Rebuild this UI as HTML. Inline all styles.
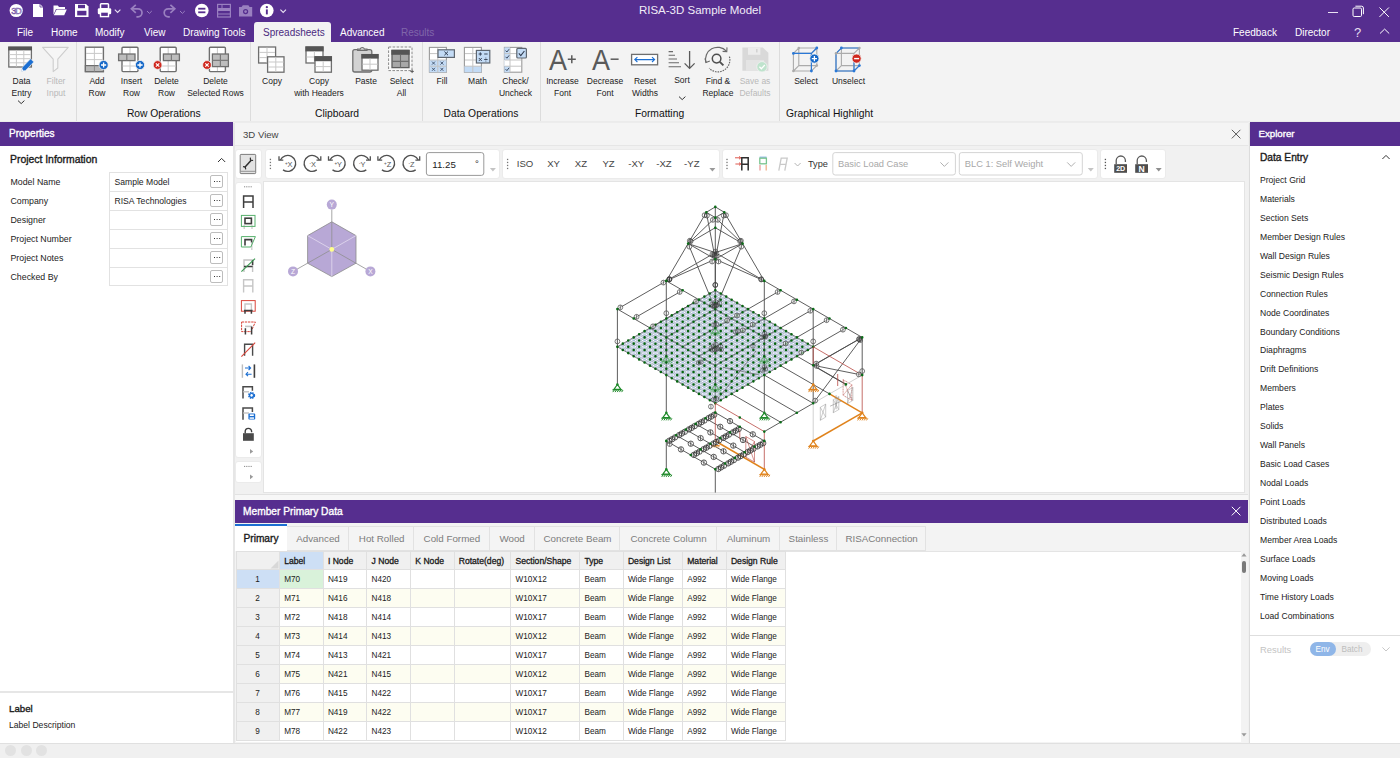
<!DOCTYPE html>
<html lang="en"><head><meta charset="utf-8"><title>RISA-3D Sample Model</title>
<style>
*{box-sizing:border-box;margin:0;padding:0}
html,body{width:1400px;height:758px;overflow:hidden;background:#f0f0f0;font-family:"Liberation Sans",sans-serif;font-size:11px;color:#1a1a1a}
.abs{position:absolute}
#app{position:relative;width:1400px;height:758px;overflow:hidden}
.pur{background:#562e8f}
#titlebar{left:0;top:0;width:1400px;height:42px}
.t{position:absolute;white-space:nowrap;line-height:1}
.tab{position:absolute;top:26px;color:#fff;font-size:10px;white-space:nowrap;line-height:14px}
#ribbon{left:0;top:42px;width:1400px;height:80.4px;background:#f3f3f3;border-bottom:1px solid #ebebeb}
.rb{position:absolute;top:75px;text-align:center;font-size:8.5px;line-height:12px;color:#222;white-space:nowrap;transform:translateX(-50%)}
.rb.dis{color:#b9b9b9}
.gl{position:absolute;top:107px;font-size:10.3px;color:#111;white-space:nowrap;transform:translateX(-50%);line-height:14px}
.vsep{position:absolute;top:42px;width:1px;height:79px;background:#dcdcdc}
.ico{position:absolute}
.hdr{position:absolute;height:23px;color:#fff;font-size:12px;line-height:23px;padding-left:9px}
.pl{left:10.5px;font-size:8.8px;color:#222}
.pv{left:114.5px;font-size:8.6px;color:#222}
.dots{position:absolute;left:210px;width:13px;height:12.5px;border:1px solid #bdbdbd;border-radius:2px;background:#fff}
.dots:after{content:"";position:absolute;left:2.5px;top:4.6px;width:1.3px;height:1.3px;background:#333;box-shadow:2.6px 0 0 #333,5.2px 0 0 #333}
.ex{left:1260px;font-size:8.6px;color:#222}
.tb{position:absolute;top:149px;height:30px;background:#fff;border-radius:3px;border:1px solid #ebebeb}
.th{font-size:8.6px;color:#1a1a1a;-webkit-text-stroke:0.3px #1a1a1a}
.td{font-size:8.2px;color:#222}
.sb{-webkit-text-stroke:0.35px currentColor}
</style></head><body><div id="app">
<div id="titlebar" class="abs pur">
<svg class="abs" style="left:0.5px;top:0.2px" width="300" height="22" viewBox="0 0 300 22">
 <!-- 3D logo -->
 <circle cx="15.2" cy="10.5" r="6.6" fill="#fff"/>
 <text x="15" y="13.7" font-size="9" text-anchor="middle" fill="#fff" stroke="#7553a6" stroke-width="0.55" font-family="Liberation Sans, sans-serif" letter-spacing="-0.9">3D</text>
 <!-- new doc -->
 <path d="M32 4h7l3 3v10h-10z" fill="#fff"/><path d="M39 4v3h3" fill="none" stroke="#562e8f" stroke-width="0.8"/>
 <!-- open folder -->
 <path d="M52.5 5.5h4.3l1.2 1.4h6v2H55l-2.5 5.8z" fill="#fff"/><path d="M55.6 9.6h10.2l-2.6 5.6h-10.4z" fill="#fff"/>
 <!-- save -->
 <path d="M74 4h11l2.5 2.5v10.5h-13.5z" fill="#fff"/><rect x="77" y="4.8" width="7" height="3.4" fill="#562e8f"/><rect x="76.2" y="10.8" width="9.2" height="4.6" fill="#562e8f"/>
 <!-- print -->
 <rect x="99.5" y="3.8" width="8" height="5" rx="0.8" fill="none" stroke="#fff" stroke-width="1.5"/><rect x="96.8" y="8.2" width="13.4" height="6" rx="1.2" fill="#fff"/><rect x="99.5" y="12" width="8" height="4.6" fill="#562e8f" stroke="#fff" stroke-width="1.4"/>
 <path d="M113.8 9.6l2.8 2.8l2.8-2.8" fill="none" stroke="#e8e0f2" stroke-width="1.1"/>
 <!-- undo (dim) -->
 <path d="M134.8 4.8l-4.4 4l4.4 4" fill="none" stroke="#9a80c0" stroke-width="1.7"/><path d="M130.8 8.8h6.2a4 4 0 0 1 0 8h-1.6" fill="none" stroke="#9a80c0" stroke-width="1.7"/>
 <path d="M146 11l2.4 2.4l2.4-2.4" fill="none" stroke="#9a80c0" stroke-width="1"/>
 <!-- redo (dim) -->
 <path d="M169.4 4.8l4.4 4l-4.4 4" fill="none" stroke="#9a80c0" stroke-width="1.7"/><path d="M173.4 8.8h-6.2a4 4 0 0 0 0 8h1.6" fill="none" stroke="#9a80c0" stroke-width="1.7"/>
 <path d="M179 11l2.4 2.4l2.4-2.4" fill="none" stroke="#9a80c0" stroke-width="1"/>
 <!-- equals circle -->
 <circle cx="200.8" cy="10.5" r="6.8" fill="#fff"/><rect x="197.2" y="7.8" width="7.2" height="1.8" fill="#562e8f"/><rect x="197.2" y="11.4" width="7.2" height="1.8" fill="#562e8f"/>
 <!-- dim table -->
 <rect x="216.6" y="4.4" width="12.8" height="12.6" fill="none" stroke="#9a80c0" stroke-width="1.2"/><rect x="217" y="8" width="12" height="3" fill="#9a80c0"/><path d="M217 14h12M221 4.4v3.6" stroke="#9a80c0" stroke-width="1"/>
 <!-- dim camera -->
 <path d="M238 7h2.6l1.2-1.8h5.6l1.2 1.8h2.6v9.4h-13.2z" fill="#9a80c0"/><circle cx="244.6" cy="11.6" r="2.6" fill="#562e8f"/><circle cx="244.6" cy="11.6" r="1.3" fill="#9a80c0"/>
 <!-- info -->
 <circle cx="265.8" cy="10.5" r="6.8" fill="#fff"/><rect x="264.9" y="9.4" width="1.9" height="5" fill="#562e8f"/><circle cx="265.85" cy="7.2" r="1.15" fill="#562e8f"/>
 <path d="M279.4 9.6l2.8 2.8l2.8-2.8" fill="none" stroke="#e8e0f2" stroke-width="1.1"/>
</svg>
<div class="t" style="left:0;width:1400px;text-align:center;top:5px;font-size:11.5px;color:#f1ecf8">RISA-3D Sample Model</div>
<svg class="abs" style="left:1320px;top:0.6px" width="80" height="22" viewBox="0 0 80 22">
 <path d="M8 11.5h10" stroke="#e9e2f3" stroke-width="1"/>
 <rect x="33" y="7" width="8.5" height="8.5" rx="1.2" fill="none" stroke="#fff" stroke-width="1"/><path d="M35.4 5.2h6.2a1.8 1.8 0 0 1 1.8 1.8v6.2" fill="none" stroke="#fff" stroke-width="1"/>
 <path d="M59.5 6.5l9.4 9.4M68.9 6.5l-9.4 9.4" stroke="#fff" stroke-width="1"/>
</svg>
<div class="tab" style="left:17px">File</div>
<div class="tab" style="left:51px">Home</div>
<div class="tab" style="left:95px">Modify</div>
<div class="tab" style="left:144px">View</div>
<div class="tab" style="left:183px">Drawing Tools</div>
<div class="abs" style="left:254px;top:22px;width:77px;height:20px;background:#f3f3f3;border-radius:3px 3px 0 0"></div>
<div class="tab" style="left:263px;color:#4a2a80">Spreadsheets</div>
<div class="tab" style="left:340px">Advanced</div>
<div class="tab" style="left:401px;color:#8066aa">Results</div>
<div class="tab" style="left:1233px;top:26px">Feedback</div>
<div class="tab" style="left:1295px;top:26px">Director</div>
<div class="tab" style="left:1354px;top:25.5px;font-size:13px;color:#e6dff0">?</div>
<svg class="abs" style="left:1378px;top:26px" width="14" height="10" viewBox="0 0 14 10"><path d="M2 7.5l4.6-4.4l4.6 4.4" fill="none" stroke="#fff" stroke-width="1"/></svg>
</div>
<div id="ribbon" class="abs"></div>
<div class="vsep" style="left:76px"></div><div class="vsep" style="left:250px"></div><div class="vsep" style="left:422px"></div><div class="vsep" style="left:540px"></div><div class="vsep" style="left:779px"></div>
<svg class="abs" style="left:0;top:42px" width="900" height="80" viewBox="0 42 900 80" font-family="Liberation Sans, sans-serif">
<defs>
 <g id="plusB"><circle r="4.6" fill="#1568c8" stroke="#f3f3f3" stroke-width="0.8"/><path d="M-2.6 0h5.2M0-2.6v5.2" stroke="#fff" stroke-width="1.3"/></g>
 <g id="xR"><circle r="4.4" fill="#d0281e" stroke="#f3f3f3" stroke-width="0.8"/><path d="M-1.7-1.7l3.4 3.4M1.7-1.7l-3.4 3.4" stroke="#fff" stroke-width="1.2"/></g>
</defs>
<!-- Data Entry -->
<g><rect x="8.8" y="47.2" width="22.6" height="19.8" fill="#fff" stroke="#6e6e6e" stroke-width="1.3"/><rect x="8.2" y="46.6" width="23.8" height="3.8" fill="#555"/>
<path d="M9.4 54.6h21.4M9.4 58.7h21.4M9.4 62.8h21.4M16.4 50.4v16.2M23.8 50.4v16.2" stroke="#c9c9c9" stroke-width="1"/>
<path d="M21.2 71.6l1.2-4.4l8.2-8.4l3.2 3.2l-8.2 8.4z" fill="#1c6fd2" stroke="#f3f3f3" stroke-width="0.6"/><path d="M21.6 71.2l0.6-2.1l1.5 1.5z" fill="#fff"/></g>
<!-- Filter -->
<path d="M42.6 47.4h25.6l-10.4 11.8v8.8l-4.6 3.6v-12.4z" fill="#f6f6f6" stroke="#cdcdcd" stroke-width="1.1" stroke-linejoin="round"/>
<!-- Add Row -->
<g><rect x="85.4" y="47.2" width="18" height="24.4" fill="#fff" stroke="#6e6e6e" stroke-width="1.4"/><rect x="85.4" y="65.6" width="18" height="6" fill="#b9b9b9" stroke="#6e6e6e" stroke-width="1.2"/>
<path d="M86 53.4h17M86 59.6h17M94.4 48v17" stroke="#c9c9c9" stroke-width="1"/><path d="M94.4 65.6v6" stroke="#8a8a8a" stroke-width="1"/><use href="#plusB" x="103.6" y="65"/></g>
<!-- Insert Row -->
<g><rect x="122" y="47.2" width="16" height="24.4" rx="1" fill="#fff" stroke="#6e6e6e" stroke-width="1.4"/><path d="M130 48v23M122.6 66h15" stroke="#c9c9c9" stroke-width="1"/>
<rect x="118.6" y="54" width="16.4" height="6.6" fill="#bdbdbd" stroke="#6e6e6e" stroke-width="1.3"/><path d="M126.8 54v6.6" stroke="#7a7a7a" stroke-width="1.2"/><use href="#plusB" x="140" y="65"/></g>
<!-- Delete Row -->
<g><rect x="160.2" y="47.2" width="16" height="24.4" rx="1" fill="#fff" stroke="#6e6e6e" stroke-width="1.4"/><path d="M168.2 48v23M161 66h15" stroke="#c9c9c9" stroke-width="1"/>
<rect x="163.4" y="54" width="16" height="6.6" fill="#bdbdbd" stroke="#6e6e6e" stroke-width="1.3"/><path d="M171.4 54v6.6" stroke="#7a7a7a" stroke-width="1.2"/><use href="#xR" x="157.6" y="65"/></g>
<!-- Delete Selected Rows -->
<g><rect x="209.4" y="47.2" width="16" height="24.4" rx="1" fill="#fff" stroke="#6e6e6e" stroke-width="1.4"/><path d="M217.4 48v23" stroke="#c9c9c9" stroke-width="1"/>
<rect x="212.4" y="54" width="16" height="12.6" fill="#bdbdbd" stroke="#6e6e6e" stroke-width="1.3"/><path d="M220.4 54v12.6M212.4 60.3h16" stroke="#7a7a7a" stroke-width="1.2"/><use href="#xR" x="207" y="65"/></g>
<!-- Copy -->
<g><rect x="258.6" y="47" width="17" height="16" fill="#fff" stroke="#6e6e6e" stroke-width="1.3"/><path d="M259 52.4h16M259 57.6h16M267 47.6v15" stroke="#c9c9c9" stroke-width="1"/>
<rect x="267.6" y="56.8" width="16.4" height="15.4" fill="#fff" stroke="#6e6e6e" stroke-width="1.3"/><path d="M268 62h15.6M268 67h15.6M275.8 57.4v14.4" stroke="#c9c9c9" stroke-width="1"/></g>
<!-- Copy with Headers -->
<g><rect x="306" y="47" width="17" height="16" fill="#fff" stroke="#6e6e6e" stroke-width="1.3"/><rect x="305.4" y="46.4" width="18.2" height="5" fill="#555"/><path d="M306.6 57h16M314.4 51.4v11" stroke="#c9c9c9" stroke-width="1"/>
<rect x="315" y="56.8" width="16.4" height="15.4" fill="#fff" stroke="#6e6e6e" stroke-width="1.3"/><rect x="314.4" y="56.2" width="17.6" height="5" fill="#555"/><path d="M315.6 66.6h15.4M323.2 61.2v10.6" stroke="#c9c9c9" stroke-width="1"/></g>
<!-- Paste -->
<g><rect x="352.8" y="49.6" width="19" height="22.4" rx="2" fill="#d2d2d2" stroke="#6e6e6e" stroke-width="1.3"/><path d="M357.6 50.4v-1.4h2.6a2.2 2.2 0 0 1 4.2 0h2.6v1.4z" fill="#d2d2d2" stroke="#6e6e6e" stroke-width="1.1"/>
<rect x="362" y="54.6" width="16" height="15.6" fill="#fff" stroke="#6e6e6e" stroke-width="1.3"/><rect x="361.4" y="54" width="17.2" height="4.6" fill="#555"/><path d="M362.6 64.2h15M370 58.6v11.4" stroke="#c9c9c9" stroke-width="1"/></g>
<!-- Select All -->
<g><rect x="388.6" y="47" width="23.4" height="23.6" fill="#fafafa" stroke="#8a8a8a" stroke-width="1" stroke-dasharray="2.6 1.4"/><rect x="392" y="50.4" width="17" height="17.2" fill="#a8a8a8" stroke="#5e5e5e" stroke-width="1.3"/><rect x="391.4" y="49.8" width="18.2" height="5" fill="#555"/><path d="M392 61.4h17M400.5 54.8v12.8" stroke="#6e6e6e" stroke-width="1.1"/><path d="M410.4 71.4h3.4M412.1 69.7v3.4" stroke="#555" stroke-width="1"/></g>
<!-- Fill -->
<g><rect x="429.4" y="47.4" width="17" height="24.8" fill="#fff" stroke="#9a9a9a" stroke-width="1.1"/><rect x="429.4" y="60" width="17" height="12.2" fill="#c3dbf5"/><path d="M430 53.6h16M430 60h16M430 66.2h16M437.8 48v24" stroke="#c4c4c4" stroke-width="1"/>
<path d="M432 61.6l3 3M435 61.6l-3 3M440.4 61.6l3 3M443.4 61.6l-3 3M432 67.8l3 3M435 67.8l-3 3M440.4 67.8l3 3M443.4 67.8l-3 3" stroke="#3e4f68" stroke-width="0.9"/>
<rect x="438" y="49.8" width="16.4" height="7.6" fill="#c3dbf5" stroke="#5e6670" stroke-width="1.2"/><path d="M444.4 51.6l3.6 3.6M448 51.6l-3.6 3.6" stroke="#2e3a4e" stroke-width="1"/></g>
<!-- Math -->
<g><rect x="464.4" y="47.4" width="17" height="24.8" fill="#fff" stroke="#9a9a9a" stroke-width="1.1"/><rect x="464.4" y="66.2" width="17" height="6" fill="#c3dbf5"/><path d="M465 53.6h16M465 60h16M465 66.2h16M472.8 48v24" stroke="#c4c4c4" stroke-width="1"/>
<rect x="476.4" y="50.4" width="13.4" height="12.6" fill="#c3dbf5" stroke="#5e6670" stroke-width="1.2"/><path d="M478.6 54h3.4M480.3 52.3v3.4M484.2 54h3.4M478.8 58l3 3M481.8 58l-3 3M484.2 59.5h3.4" stroke="#2e3a4e" stroke-width="0.9"/><circle cx="485.9" cy="57.9" r="0.5" fill="#2e3a4e"/><circle cx="485.9" cy="61.1" r="0.5" fill="#2e3a4e"/></g>
<!-- Check/Uncheck -->
<g><rect x="504.4" y="47.4" width="17.4" height="24.8" fill="#fff" stroke="#9a9a9a" stroke-width="1.1"/><rect x="504.4" y="47.4" width="5.6" height="24.8" fill="#c3dbf5"/><rect x="504.4" y="60" width="5.6" height="6" fill="#fff"/><path d="M505 53.6h16M505 60h16M505 66.2h16M510 48v24" stroke="#c4c4c4" stroke-width="1"/>
<path d="M505.6 50.6l1.3 1.4l2.2-2.8M505.6 56.8l1.3 1.4l2.2-2.8M505.6 69.2l1.3 1.4l2.2-2.8" fill="none" stroke="#2e3a4e" stroke-width="0.9"/>
<rect x="516.8" y="48.4" width="9.6" height="9.6" rx="1" fill="#c3dbf5" stroke="#5e6670" stroke-width="1.2"/><path d="M518.8 53.4l2 2.2l3.6-4.6" fill="none" stroke="#2e3a4e" stroke-width="1.1"/></g>
<!-- Increase / Decrease font -->
<text x="549" y="70" font-size="29" fill="#5a5a5a" textLength="18" lengthAdjust="spacingAndGlyphs">A</text><path d="M567.8 59.2h8M571.8 55.2v8" stroke="#5a5a5a" stroke-width="1.5"/>
<text x="592" y="70" font-size="29" fill="#5a5a5a" textLength="18" lengthAdjust="spacingAndGlyphs">A</text><path d="M610.6 59.2h8" stroke="#5a5a5a" stroke-width="1.5"/>
<!-- Reset Widths -->
<g><rect x="631.6" y="54.4" width="26" height="10.4" fill="#fff" stroke="#6e6e6e" stroke-width="1.3"/><path d="M635 59.6h19.4M637.4 57.2l-2.6 2.4l2.6 2.4M652 57.2l2.6 2.4l-2.6 2.4" fill="none" stroke="#1c6fd2" stroke-width="1.1"/></g>
<!-- Sort -->
<path d="M668.6 51.6h4.4M668.6 55.3h6.4M668.6 59h8.4M668.6 62.8h10.4M668.6 66.8h12.4" stroke="#6a6a6a" stroke-width="1.1"/><path d="M689.6 51v17.2M684.6 63.4l5 5l5-5" fill="none" stroke="#5a5a5a" stroke-width="1.3"/>
<!-- Find & Replace -->
<g fill="none" stroke="#6a6a6a"><path d="M706 62.6a12 12 0 0 1 20.4-11.4" stroke-width="1.2"/><path d="M729.4 56.6a12 12 0 0 1-20.2 11.6" stroke-width="1.2" stroke-dasharray="1.6 1"/><path d="M722.6 51.4l4.2 0.2l0.2-4.2M705 58.4l1 4.2l3.8-1.6" stroke-width="1.1"/><circle cx="716.6" cy="58.6" r="4.3" stroke-width="1.5" stroke="#4e4e4e"/><path d="M719.8 61.8l3.6 3.6" stroke-width="1.9" stroke="#4e4e4e"/></g>
<!-- Save as defaults (disabled) -->
<g><path d="M742.4 47.4h20.4l5.6 5.4v18h-26z" fill="#d9d9d9"/><rect x="748" y="47.4" width="12.4" height="7.4" fill="#ececec"/><rect x="756" y="49" width="1.6" height="3.4" fill="#d2d2d2"/><rect x="746" y="60" width="18" height="10.8" fill="#e4e4e4"/><circle cx="762" cy="66.8" r="5.2" fill="#bfe3cd" stroke="#f3f3f3" stroke-width="0.8"/><path d="M759.4 66.8l2 2l3.4-3.8" fill="none" stroke="#fff" stroke-width="1.3"/></g>
<!-- Select -->
<g fill="none" stroke-width="1.1"><path d="M793.4 53.4l5.4-5.4h18v17.6l-5.4 5.4h-18zM793.4 53.4h18v17.6M811.4 53.4l5.4-5.4M798.8 48v17.6h18M798.8 65.6l-5.4 5.4" stroke="#ababab"/><path d="M793.4 53.4h18l5.4-5.4M811.4 53.4v17.6" stroke="#2a78d6"/>
<g fill="#2a78d6" stroke="none"><circle cx="793.4" cy="53.4" r="1.4"/><circle cx="816.8" cy="48" r="1.4"/><circle cx="811.4" cy="71" r="1.4"/></g><g fill="#ababab" stroke="none"><circle cx="798.8" cy="48" r="1.3"/><circle cx="793.4" cy="71" r="1.3"/><circle cx="816.8" cy="65.6" r="1.3"/></g></g><use href="#plusB" x="814.4" y="58.6"/>
<!-- Unselect -->
<g fill="none" stroke-width="1.1"><path d="M836 53.4l5.4-5.4h18v17.6l-5.4 5.4h-18zM836 53.4h18v17.6M854 53.4l5.4-5.4M841.4 48v17.6h18M841.4 65.6l-5.4 5.4" stroke="#ababab"/><path d="M836 71v-17.6l5.4-5.4h18M836 71h18l5.4-5.4M854 71v-10" stroke="#2a78d6"/>
<g fill="#2a78d6" stroke="none"><circle cx="836" cy="71" r="1.4"/><circle cx="854" cy="71" r="1.4"/><circle cx="841.4" cy="48" r="1.4"/><circle cx="859.4" cy="65.6" r="1.4"/></g><g fill="#ababab" stroke="none"><circle cx="836" cy="53.4" r="1.3"/><circle cx="859.4" cy="48" r="1.3"/></g></g>
<g transform="translate(856.6 58.6)"><circle r="4.6" fill="#d0281e" stroke="#f3f3f3" stroke-width="0.8"/><path d="M-2.5 0h5" stroke="#fff" stroke-width="1.4"/></g>
<!-- chevrons -->
<path d="M18 100.6l3.2 3l3.2-3" fill="none" stroke="#333" stroke-width="1"/><path d="M679 96.6l3.2 3l3.2-3" fill="none" stroke="#333" stroke-width="1"/>
</svg>
<div class="rb" style="left:21.5px">Data<br>Entry</div>
<div class="rb dis" style="left:56px">Filter<br>Input</div>
<div class="rb" style="left:97px">Add<br>Row</div>
<div class="rb" style="left:131.5px">Insert<br>Row</div>
<div class="rb" style="left:166.5px">Delete<br>Row</div>
<div class="rb" style="left:215.5px">Delete<br>Selected Rows</div>
<div class="rb" style="left:272px">Copy</div>
<div class="rb" style="left:319px">Copy<br>with Headers</div>
<div class="rb" style="left:366px">Paste</div>
<div class="rb" style="left:401.5px">Select<br>All</div>
<div class="rb" style="left:442px">Fill</div>
<div class="rb" style="left:477.5px">Math</div>
<div class="rb" style="left:515.5px">Check/<br>Uncheck</div>
<div class="rb" style="left:562.5px">Increase<br>Font</div>
<div class="rb" style="left:605px">Decrease<br>Font</div>
<div class="rb" style="left:645px">Reset<br>Widths</div>
<div class="rb" style="left:682px;top:74px">Sort</div>
<div class="rb" style="left:718px">Find &amp;<br>Replace</div>
<div class="rb dis" style="left:755px">Save as<br>Defaults</div>
<div class="rb" style="left:806px">Select</div>
<div class="rb" style="left:848.5px">Unselect</div>
<div class="gl" style="left:163.8px">Row Operations</div>
<div class="gl" style="left:337px">Clipboard</div>
<div class="gl" style="left:481px">Data Operations</div>
<div class="gl" style="left:659.5px">Formatting</div>
<div class="gl" style="left:829.5px">Graphical Highlight</div>
<!-- LEFT: Properties -->
<div class="abs" style="left:0;top:123px;width:233px;height:620px;background:#fff"></div>
<div class="abs pur" style="left:0;top:122.4px;width:233px;height:23.4px"></div>
<div class="t" style="left:9px;top:129px;font-size:10px;color:#fff;-webkit-text-stroke:0.35px #fff">Properties</div>
<div class="t" style="left:10px;top:154.6px;font-size:10.4px;color:#1a1a1a;-webkit-text-stroke:0.35px #1a1a1a">Project Information</div>
<svg class="abs" style="left:216px;top:155px" width="12" height="10" viewBox="0 0 12 10"><path d="M2 7l3.6-3.6l3.6 3.6" fill="none" stroke="#333" stroke-width="1"/></svg>
<div class="abs" style="left:108.5px;top:171.8px;width:119.5px;height:114.4px;border:1px solid #e2e2e2;background:#fff"></div>
<div class="abs" style="left:109px;top:190.8px;width:118px;height:1px;background:#e2e2e2"></div>
<div class="abs" style="left:109px;top:209.8px;width:118px;height:1px;background:#e2e2e2"></div>
<div class="abs" style="left:109px;top:228.8px;width:118px;height:1px;background:#e2e2e2"></div>
<div class="abs" style="left:109px;top:247.8px;width:118px;height:1px;background:#e2e2e2"></div>
<div class="abs" style="left:109px;top:266.8px;width:118px;height:1px;background:#e2e2e2"></div>
<div class="t pl" style="top:177.5px">Model Name</div><div class="t pl" style="top:196.5px">Company</div><div class="t pl" style="top:215.5px">Designer</div><div class="t pl" style="top:234.5px">Project Number</div><div class="t pl" style="top:253.5px">Project Notes</div><div class="t pl" style="top:272.5px">Checked By</div>
<div class="t pv" style="top:177.5px">Sample Model</div><div class="t pv" style="top:196.5px">RISA Technologies</div>
<div class="dots" style="top:175.4px"></div><div class="dots" style="top:194.4px"></div><div class="dots" style="top:213.4px"></div><div class="dots" style="top:232.4px"></div><div class="dots" style="top:251.4px"></div><div class="dots" style="top:270.4px"></div>
<div class="abs" style="left:0;top:691px;width:233px;height:2px;background:#e6e6e6"></div>
<div class="t" style="left:9px;top:704px;font-size:9.7px;color:#1a1a1a;-webkit-text-stroke:0.35px #1a1a1a">Label</div>
<div class="t" style="left:9px;top:720.5px;font-size:8.6px;color:#222">Label Description</div>
<!-- status bar -->
<div class="abs" style="left:0;top:743px;width:1400px;height:15px;background:#f0f0f0;border-top:1px solid #e0e0e0"></div>
<div class="abs" style="left:5px;top:745px;width:11px;height:11px;border-radius:50%;background:#e2e2e2"></div>
<div class="abs" style="left:20.5px;top:745px;width:11px;height:11px;border-radius:50%;background:#e2e2e2"></div>
<div class="abs" style="left:36px;top:745px;width:11px;height:11px;border-radius:50%;background:#e2e2e2"></div>
<!-- CENTER: 3D View -->
<div class="abs" style="left:233px;top:123px;width:2px;height:620px;background:#e6e6e6"></div>
<div class="abs" style="left:235px;top:494px;width:1013px;height:6px;background:#f7f7f7;border-top:1px solid #e2e2e2"></div>
<div class="abs" style="left:235px;top:123px;width:1013px;height:371px;background:#f1f1f1"></div>
<div class="abs" style="left:235px;top:122.4px;width:1013px;height:23.6px;background:#f4f4f4;border-bottom:1px solid #e6e6e6;border-top:1px solid #ececec"></div>
<div class="t" style="left:243px;top:130px;font-size:9.6px;color:#444">3D View</div>
<svg class="abs" style="left:1230px;top:128px" width="12" height="12" viewBox="0 0 12 12"><path d="M1.8 1.8l8.6 8.6M10.4 1.8l-8.6 8.6" stroke="#5a5a5a" stroke-width="1"/></svg>
<!-- toolbar boxes -->
<div class="tb" style="left:235px;width:26.6px"></div>
<div class="tb" style="left:265px;width:234.5px"></div>
<div class="tb" style="left:502px;width:217.5px"></div>
<div class="tb" style="left:721.5px;width:376px"></div>
<div class="tb" style="left:1100px;width:65.5px"></div>
<div class="tb" style="left:235px;width:26.6px;top:181.5px;height:276px"></div>
<div class="tb" style="left:235px;width:26.6px;top:460.6px;height:22.8px"></div>
<!-- canvas -->
<div class="abs" style="left:263px;top:180.5px;width:981.5px;height:312.8px;background:#fff;border:1px solid #e4e4e4"></div>
<svg class="abs" style="left:235px;top:146px" width="1013" height="348" viewBox="235 146 1013 348" font-family="Liberation Sans, sans-serif">
<defs>
 <g id="grip"><rect x="-0.65" y="-5.2" width="1.3" height="1.3"/><rect x="-0.65" y="-2.2" width="1.3" height="1.3"/><rect x="-0.65" y="0.8" width="1.3" height="1.3"/><rect x="-0.65" y="3.8" width="1.3" height="1.3"/></g>
 <g id="rotL" fill="none" stroke="#505050" stroke-width="1.3"><path d="M-7.3 -3.3A8 8 0 1 1 -4.7 6.5"/><path d="M-8.7 -7.2V-3.2H-4.4"/></g>
 <g id="rotR" fill="none" stroke="#505050" stroke-width="1.3"><path d="M7.3 -3.3A8 8 0 1 0 4.7 6.5"/><path d="M8.7 -7.2V-3.2H4.4"/></g>
 <path id="ovf" d="M-3 -1.6h6l-3 3.4z"/>
</defs>
<!-- wrench button -->
<rect x="240.2" y="154.4" width="15.5" height="19.2" rx="0.8" fill="#e3e3e3" stroke="#7c7c7c" stroke-width="1"/><path d="M240.6 171.3h14.8" stroke="#8a8a8a" stroke-width="0.9"/>
<path d="M244.6 167.4l6.6-7.2" stroke="#2e2e2e" stroke-width="1.5"/><path d="M250.3 157.6l0.2 2.6l2.6 0.3" fill="none" stroke="#2e2e2e" stroke-width="1.2"/><path d="M243 166.6l2.3 0.4l0.4 2.4" fill="none" stroke="#2e2e2e" stroke-width="1.2"/>
<!-- box2 -->
<use href="#grip" x="270.4" y="164" fill="#777"/>
<use href="#rotL" x="287.7" y="163.4"/><text x="288.7" y="166.6" font-size="7.4" fill="#555" text-anchor="middle"><tspan font-size="4.6" dy="-1.2">+</tspan><tspan dy="1.2">X</tspan></text>
<use href="#rotR" x="312.1" y="163.4"/><text x="312.70000000000005" y="166.6" font-size="7.4" fill="#555" text-anchor="middle"><tspan font-size="4.6" dy="-1.2">-</tspan><tspan dy="1.2">X</tspan></text>
<use href="#rotL" x="337.2" y="163.4"/><text x="338.2" y="166.6" font-size="7.4" fill="#555" text-anchor="middle"><tspan font-size="4.6" dy="-1.2">+</tspan><tspan dy="1.2">Y</tspan></text>
<use href="#rotR" x="361.6" y="163.4"/><text x="362.20000000000005" y="166.6" font-size="7.4" fill="#555" text-anchor="middle"><tspan font-size="4.6" dy="-1.2">-</tspan><tspan dy="1.2">Y</tspan></text>
<use href="#rotL" x="386.6" y="163.4"/><text x="387.6" y="166.6" font-size="7.4" fill="#555" text-anchor="middle"><tspan font-size="4.6" dy="-1.2">+</tspan><tspan dy="1.2">Z</tspan></text>
<use href="#rotR" x="411" y="163.4"/><text x="411.6" y="166.6" font-size="7.4" fill="#555" text-anchor="middle"><tspan font-size="4.6" dy="-1.2">-</tspan><tspan dy="1.2">Z</tspan></text>
<rect x="426.4" y="152.6" width="57.4" height="22.8" rx="2.4" fill="#fff" stroke="#9a9a9a" stroke-width="1"/>
<text x="432.3" y="167.6" font-size="9.7" fill="#222">11.25</text><text x="475" y="167.2" font-size="9.7" fill="#222">°</text>
<use href="#ovf" x="492.9" y="169.6" fill="#c4c4c4"/>
<!-- box3 -->
<use href="#grip" x="507.6" y="164" fill="#777"/>
<g font-size="9.6" fill="#444" text-anchor="middle"><text x="525" y="167.4">ISO</text><text x="553.6" y="167.4">XY</text><text x="581" y="167.4">XZ</text><text x="608.6" y="167.4">YZ</text><text x="636.2" y="167.4">-XY</text><text x="664" y="167.4">-XZ</text><text x="691.8" y="167.4">-YZ</text></g>
<use href="#ovf" x="712.4" y="169.6" fill="#9a9a9a"/>
<!-- box4 -->
<use href="#grip" x="727" y="164" fill="#777"/>
<path d="M741.8 170.4v-12.6h6.4v12.6M741.8 164.2h6.4" fill="none" stroke="#2e2e2e" stroke-width="1.5"/><path d="M735 157.8h5.6M735.4 164h5.2M739 156.4l1.8 1.4l-1.8 1.4M739 162.6l1.8 1.4l-1.8 1.4" fill="none" stroke="#d9453a" stroke-width="0.9"/>
<path d="M759.6 157.2h7" stroke="#7aa8e0" stroke-width="1.1"/><rect x="759.8" y="158.2" width="6.6" height="5.6" fill="none" stroke="#79c48e" stroke-width="1.3"/><path d="M760 165v5.6" stroke="#e89a9a" stroke-width="1.3"/><path d="M766.2 165v5.6" stroke="#f0b088" stroke-width="1.3"/>
<path d="M778.8 170.6l2.4-12.4h6l-2.4 12.4M780 164.4h6" fill="none" stroke="#c9c9c9" stroke-width="1.3"/>
<path d="M794.6 163l3 3l3-3" fill="none" stroke="#b5b5b5" stroke-width="1"/>
<text x="808" y="167.2" font-size="9.2" fill="#333">Type</text>
<rect x="832.8" y="152.6" width="122.6" height="22.4" rx="2.4" fill="#fff" stroke="#d4d4d4" stroke-width="1"/><text x="838" y="167.2" font-size="9.3" fill="#a8a8a8">Basic Load Case</text><path d="M940.4 162.4l4 4l4-4" fill="none" stroke="#b0b0b0" stroke-width="1"/>
<rect x="959.3" y="152.6" width="123" height="22.4" rx="2.4" fill="#fff" stroke="#d4d4d4" stroke-width="1"/><text x="964.8" y="167.2" font-size="9.3" fill="#a8a8a8">BLC 1: Self Weight</text><path d="M1067.2 162.4l4 4l4-4" fill="none" stroke="#b0b0b0" stroke-width="1"/>
<use href="#ovf" x="1090.8" y="169.6" fill="#c4c4c4"/>
<!-- box5 -->
<use href="#grip" x="1105.4" y="164" fill="#555"/>
<path d="M1116.2 164v-3.4a4.6 4.6 0 0 1 9.2 0v1.4" fill="none" stroke="#5a5a5a" stroke-width="1.3"/><rect x="1114.2" y="164.2" width="12.8" height="8.6" fill="#4e4e4e"/><text x="1120.6" y="171.4" font-size="7.2" font-weight="700" fill="#fff" text-anchor="middle" letter-spacing="-0.3">2D</text>
<path d="M1137.2 164v-3.4a4.6 4.6 0 0 1 9.2 0v1.4" fill="none" stroke="#5a5a5a" stroke-width="1.3"/><rect x="1135.2" y="164.2" width="12.8" height="8.6" fill="#4e4e4e"/><text x="1141.6" y="171.9" font-size="8.6" font-weight="700" fill="#fff" text-anchor="middle">N</text>
<use href="#ovf" x="1158.7" y="169.6" fill="#8e8e8e"/>
<!-- vertical toolbar -->
<g id="vt">
<path d="M244 186.8h1.2M246.2 186.8h1.2M248.4 186.8h1.2M250.6 186.8h1.2" stroke="#888" stroke-width="1"/>
<path d="M243.6 208v-12h9.4v12M243.6 202h9.4" fill="none" stroke="#3e3e3e" stroke-width="1.5"/>
<path d="M244.2 229v-4M252 229v-4" stroke="#d0d0d0" stroke-width="1.4"/><rect x="241.4" y="215.4" width="13.6" height="11" fill="none" stroke="#57b06c" stroke-width="1"/><rect x="245" y="218.2" width="6.4" height="5.4" fill="none" stroke="#3e3e3e" stroke-width="1.6"/>
<path d="M251.8 250v-7" stroke="#d0d0d0" stroke-width="1.4"/><path d="M241.4 236.6h14l-4.6 10.4h-9.4z" fill="none" stroke="#57b06c" stroke-width="1"/><path d="M245 245.4v-5.8h6.6v3" fill="none" stroke="#3e3e3e" stroke-width="1.6"/>
<path d="M244 272v-12h8.6v12" fill="none" stroke="#c4c4c4" stroke-width="1.4"/><path d="M244 266.4h8.6M252.6 260v5" stroke="#3e3e3e" stroke-width="1.5"/><path d="M241.4 271.6l13.6-13" stroke="#3c9a52" stroke-width="1.2"/>
<path d="M243.6 292.4v-12.6h9.2v12.6M243.6 286h9.2" fill="none" stroke="#c6c6c6" stroke-width="1.4"/>
<rect x="241.4" y="300.6" width="13.8" height="10.6" fill="none" stroke="#d9453a" stroke-width="1"/><path d="M245 310v-6h6.4v6" fill="none" stroke="#c6c6c6" stroke-width="1.4"/><path d="M245 310.4v3.4M251.4 310.4v3.4M244 310.6h8.6" stroke="#3e3e3e" stroke-width="1.5"/>
<path d="M241.6 322h13.8l-4.4 9.6h-9.4z" fill="none" stroke="#d9453a" stroke-width="1" stroke-dasharray="2.4 0.8"/><path d="M245 326.4h6.6" stroke="#c6c6c6" stroke-width="1.6"/><path d="M245.4 334.6v-6.4M251.6 334.6v-8" stroke="#3e3e3e" stroke-width="1.5"/>
<path d="M244.6 355.8v-11.6h8v11.6" fill="none" stroke="#4a4a4a" stroke-width="1.4"/><path d="M241.4 356.6l13.8-14" stroke="#d9453a" stroke-width="1.1"/>
<path d="M242.4 364.4v13.4" stroke="#bdbdbd" stroke-width="1.4"/><path d="M254.4 364.4v13.4" stroke="#3e3e3e" stroke-width="1.6"/><path d="M245 368h5.6M248.6 366l2 2l-2 2M251.6 374.2h-5.6M248 372.2l-2 2l2 2" fill="none" stroke="#1c6fd2" stroke-width="1.1"/>
<path d="M243 398.6v-11.8h9.4v4" fill="none" stroke="#4a4a4a" stroke-width="1.5"/><path d="M243 391.8h6" stroke="#bdbdbd" stroke-width="1.3"/><circle cx="251.6" cy="395.4" r="2.6" fill="none" stroke="#1c6fd2" stroke-width="1.9" stroke-dasharray="1.4 0.7"/><circle cx="251.6" cy="395.4" r="1.9" fill="none" stroke="#1c6fd2" stroke-width="1.2"/>
<path d="M243 419.8v-11.8h9.4v4" fill="none" stroke="#4a4a4a" stroke-width="1.5"/><path d="M243 413h6" stroke="#bdbdbd" stroke-width="1.3"/><rect x="248.4" y="413.6" width="6.8" height="6" rx="0.8" fill="#1c6fd2"/><rect x="249.8" y="414.4" width="4" height="1.6" fill="#fff"/><rect x="249.6" y="417.2" width="4.4" height="1.8" fill="#cfe0f5"/>
<path d="M245.2 433.6v-2a3.2 3.2 0 0 1 6.4 0v0.6" fill="none" stroke="#3e3e3e" stroke-width="1.4"/><rect x="243" y="433.2" width="10.8" height="7.6" fill="#4a4a4a"/>
<path d="M250 449l3.2 2.4l-3.2 2.4z" fill="#9a9a9a"/>
<path d="M244 466.4h1.2M246.2 466.4h1.2M248.4 466.4h1.2M250.6 466.4h1.2" stroke="#888" stroke-width="1"/>
<path d="M250 474.4l3.2 2.4l-3.2 2.4z" fill="#9a9a9a"/>
</g>
</svg>
<svg class="abs" style="left:264px;top:181px" width="980" height="312" viewBox="264 181 980 312">
<g id="axiscube" font-family="Liberation Sans, sans-serif">
<path d="M331.8 221.8L356 235.6V263.2L331.8 276.6L307.6 263.2V235.6z" fill="#b8a8d6" stroke="#8c8c8c" stroke-width="0.8"/>
<path d="M331.8 249.4L307.6 235.6M331.8 249.4L356 235.6M331.8 249.4V276.6" stroke="#e9e3f3" stroke-width="0.7"/>
<path d="M331.8 249.4V209.4M331.8 249.4L297 269.2M331.8 249.4L366.4 269.2" stroke="#8f8f8f" stroke-width="0.8"/>
<circle cx="331.8" cy="204.6" r="5" fill="#b8a8d6"/><circle cx="293" cy="271.4" r="5" fill="#b8a8d6"/><circle cx="370.4" cy="271.4" r="5" fill="#b8a8d6"/>
<circle cx="331.8" cy="249.4" r="2.4" fill="#ffff8c"/>
<g font-size="6.6" fill="#fff" text-anchor="middle"><text x="331.8" y="207">Y</text><text x="293" y="273.8">Z</text><text x="370.4" y="273.8">X</text></g>
</g>
<g id="model">
<clipPath id="mclip"><path d="M617.4 346.8L715.3 290.3L813.2 346.8L715.3 403.3z"/></clipPath>
<path d="M715.3 252.6L715.3 328.0M666.3 280.9L666.3 356.3M617.4 309.1L617.4 384.5M764.3 280.9L764.3 356.3M715.3 309.1L715.3 384.5M666.3 337.4L666.3 412.8M813.2 309.1L813.2 384.5M764.3 337.4L764.3 412.8M715.3 365.6L715.3 403.3M862.2 337.4L862.2 375.1M813.2 385.3L813.2 403.3M715.3 252.6L862.2 337.4M715.3 252.6L617.4 309.1M617.4 309.1L715.3 365.6M666.3 280.9L764.3 337.4M682.7 290.3L633.7 318.5M699.0 299.7L650.0 328.0M780.6 290.3L682.7 346.8M796.9 299.7L699.0 356.2M813.2 309.1L715.3 365.6M829.5 318.5L780.6 346.8M845.9 328.0L796.9 356.2M862.2 337.4L813.2 365.6M715.3 309.1L666.3 337.4M796.9 356.2L845.9 384.5M780.6 365.7L829.5 393.9M764.3 375.1L813.2 403.3M747.9 384.5L796.9 412.8M731.6 393.9L780.6 422.2M813.2 403.3L764.3 431.6M813.2 365.3L862.2 337.4M813.2 365.3L862.2 375.1M862.2 337.4L813.2 403.3M813.2 365.3L845.9 384.2M756.0 351.0L718.0 398.8M723.0 367.5L759.3 374.9M715.3 206.9L715.3 309.1M666.3 280.9L688.1 243.6M764.3 280.9L742.6 243.6M688.1 243.6L706.3 212.3M742.6 243.6L724.3 212.3M688.1 243.6L715.3 227.7M742.6 243.6L715.3 227.7M688.1 243.6L715.3 259.2M742.6 243.6L715.3 259.2M715.3 206.9L706.3 212.3M715.3 206.9L724.3 212.3M706.3 212.3L715.3 217.6M724.3 212.3L715.3 217.6M706.3 212.3L715.3 259.2M724.3 212.3L715.3 259.2M688.1 243.6L715.3 217.6M742.6 243.6L715.3 217.6M688.1 243.6L715.3 309.1M742.6 243.6L715.3 309.1M666.3 280.9L715.3 259.2M764.3 280.9L715.3 259.2M688.1 243.6L715.3 252.6M742.6 243.6L715.3 252.6M715.3 412.6L666.3 440.9M739.8 426.8L690.8 455.0M764.3 440.9L715.3 469.2M715.3 412.6L764.3 440.9M705.5 418.3L754.5 446.6M695.7 423.9L744.7 452.2M685.9 429.6L734.9 457.9M676.1 435.2L725.1 463.5M666.3 440.9L715.3 469.2M666.3 440.9L666.3 469.3M715.3 469.2L715.3 492.6" fill="none" stroke="#4c4c4c" stroke-width="0.9"/>
<path d="M617.4 346.8L715.3 290.3L813.2 346.8L715.3 403.3z" fill="#c6d3e6" fill-opacity="0.8" stroke="#5e5e5e" stroke-width="0.8"/>
<path d="M712.20 293.44a3.1 1.55 0 1 0 6.2 0a3.1 1.55 0 1 0 -6.2 0M706.76 296.58a3.1 1.55 0 1 0 6.2 0a3.1 1.55 0 1 0 -6.2 0M701.32 299.72a3.1 1.55 0 1 0 6.2 0a3.1 1.55 0 1 0 -6.2 0M695.88 302.86a3.1 1.55 0 1 0 6.2 0a3.1 1.55 0 1 0 -6.2 0M690.44 306.00a3.1 1.55 0 1 0 6.2 0a3.1 1.55 0 1 0 -6.2 0M685.00 309.14a3.1 1.55 0 1 0 6.2 0a3.1 1.55 0 1 0 -6.2 0M679.56 312.28a3.1 1.55 0 1 0 6.2 0a3.1 1.55 0 1 0 -6.2 0M674.12 315.42a3.1 1.55 0 1 0 6.2 0a3.1 1.55 0 1 0 -6.2 0M668.68 318.56a3.1 1.55 0 1 0 6.2 0a3.1 1.55 0 1 0 -6.2 0M663.24 321.70a3.1 1.55 0 1 0 6.2 0a3.1 1.55 0 1 0 -6.2 0M657.80 324.84a3.1 1.55 0 1 0 6.2 0a3.1 1.55 0 1 0 -6.2 0M652.36 327.98a3.1 1.55 0 1 0 6.2 0a3.1 1.55 0 1 0 -6.2 0M646.92 331.12a3.1 1.55 0 1 0 6.2 0a3.1 1.55 0 1 0 -6.2 0M641.48 334.26a3.1 1.55 0 1 0 6.2 0a3.1 1.55 0 1 0 -6.2 0M636.04 337.40a3.1 1.55 0 1 0 6.2 0a3.1 1.55 0 1 0 -6.2 0M630.60 340.54a3.1 1.55 0 1 0 6.2 0a3.1 1.55 0 1 0 -6.2 0M625.16 343.68a3.1 1.55 0 1 0 6.2 0a3.1 1.55 0 1 0 -6.2 0M619.72 346.82a3.1 1.55 0 1 0 6.2 0a3.1 1.55 0 1 0 -6.2 0M717.64 296.58a3.1 1.55 0 1 0 6.2 0a3.1 1.55 0 1 0 -6.2 0M712.20 299.72a3.1 1.55 0 1 0 6.2 0a3.1 1.55 0 1 0 -6.2 0M706.76 302.86a3.1 1.55 0 1 0 6.2 0a3.1 1.55 0 1 0 -6.2 0M701.32 306.00a3.1 1.55 0 1 0 6.2 0a3.1 1.55 0 1 0 -6.2 0M695.88 309.14a3.1 1.55 0 1 0 6.2 0a3.1 1.55 0 1 0 -6.2 0M690.44 312.28a3.1 1.55 0 1 0 6.2 0a3.1 1.55 0 1 0 -6.2 0M685.00 315.42a3.1 1.55 0 1 0 6.2 0a3.1 1.55 0 1 0 -6.2 0M679.56 318.56a3.1 1.55 0 1 0 6.2 0a3.1 1.55 0 1 0 -6.2 0M674.12 321.70a3.1 1.55 0 1 0 6.2 0a3.1 1.55 0 1 0 -6.2 0M668.68 324.84a3.1 1.55 0 1 0 6.2 0a3.1 1.55 0 1 0 -6.2 0M663.24 327.98a3.1 1.55 0 1 0 6.2 0a3.1 1.55 0 1 0 -6.2 0M657.80 331.12a3.1 1.55 0 1 0 6.2 0a3.1 1.55 0 1 0 -6.2 0M652.36 334.26a3.1 1.55 0 1 0 6.2 0a3.1 1.55 0 1 0 -6.2 0M646.92 337.40a3.1 1.55 0 1 0 6.2 0a3.1 1.55 0 1 0 -6.2 0M641.48 340.54a3.1 1.55 0 1 0 6.2 0a3.1 1.55 0 1 0 -6.2 0M636.04 343.68a3.1 1.55 0 1 0 6.2 0a3.1 1.55 0 1 0 -6.2 0M630.60 346.82a3.1 1.55 0 1 0 6.2 0a3.1 1.55 0 1 0 -6.2 0M625.16 349.96a3.1 1.55 0 1 0 6.2 0a3.1 1.55 0 1 0 -6.2 0M723.08 299.72a3.1 1.55 0 1 0 6.2 0a3.1 1.55 0 1 0 -6.2 0M717.64 302.86a3.1 1.55 0 1 0 6.2 0a3.1 1.55 0 1 0 -6.2 0M712.20 306.00a3.1 1.55 0 1 0 6.2 0a3.1 1.55 0 1 0 -6.2 0M706.76 309.14a3.1 1.55 0 1 0 6.2 0a3.1 1.55 0 1 0 -6.2 0M701.32 312.28a3.1 1.55 0 1 0 6.2 0a3.1 1.55 0 1 0 -6.2 0M695.88 315.42a3.1 1.55 0 1 0 6.2 0a3.1 1.55 0 1 0 -6.2 0M690.44 318.56a3.1 1.55 0 1 0 6.2 0a3.1 1.55 0 1 0 -6.2 0M685.00 321.70a3.1 1.55 0 1 0 6.2 0a3.1 1.55 0 1 0 -6.2 0M679.56 324.84a3.1 1.55 0 1 0 6.2 0a3.1 1.55 0 1 0 -6.2 0M674.12 327.98a3.1 1.55 0 1 0 6.2 0a3.1 1.55 0 1 0 -6.2 0M668.68 331.12a3.1 1.55 0 1 0 6.2 0a3.1 1.55 0 1 0 -6.2 0M663.24 334.26a3.1 1.55 0 1 0 6.2 0a3.1 1.55 0 1 0 -6.2 0M657.80 337.40a3.1 1.55 0 1 0 6.2 0a3.1 1.55 0 1 0 -6.2 0M652.36 340.54a3.1 1.55 0 1 0 6.2 0a3.1 1.55 0 1 0 -6.2 0M646.92 343.68a3.1 1.55 0 1 0 6.2 0a3.1 1.55 0 1 0 -6.2 0M641.48 346.82a3.1 1.55 0 1 0 6.2 0a3.1 1.55 0 1 0 -6.2 0M636.04 349.96a3.1 1.55 0 1 0 6.2 0a3.1 1.55 0 1 0 -6.2 0M630.60 353.10a3.1 1.55 0 1 0 6.2 0a3.1 1.55 0 1 0 -6.2 0M728.52 302.86a3.1 1.55 0 1 0 6.2 0a3.1 1.55 0 1 0 -6.2 0M723.08 306.00a3.1 1.55 0 1 0 6.2 0a3.1 1.55 0 1 0 -6.2 0M717.64 309.14a3.1 1.55 0 1 0 6.2 0a3.1 1.55 0 1 0 -6.2 0M712.20 312.28a3.1 1.55 0 1 0 6.2 0a3.1 1.55 0 1 0 -6.2 0M706.76 315.42a3.1 1.55 0 1 0 6.2 0a3.1 1.55 0 1 0 -6.2 0M701.32 318.56a3.1 1.55 0 1 0 6.2 0a3.1 1.55 0 1 0 -6.2 0M695.88 321.70a3.1 1.55 0 1 0 6.2 0a3.1 1.55 0 1 0 -6.2 0M690.44 324.84a3.1 1.55 0 1 0 6.2 0a3.1 1.55 0 1 0 -6.2 0M685.00 327.98a3.1 1.55 0 1 0 6.2 0a3.1 1.55 0 1 0 -6.2 0M679.56 331.12a3.1 1.55 0 1 0 6.2 0a3.1 1.55 0 1 0 -6.2 0M674.12 334.26a3.1 1.55 0 1 0 6.2 0a3.1 1.55 0 1 0 -6.2 0M668.68 337.40a3.1 1.55 0 1 0 6.2 0a3.1 1.55 0 1 0 -6.2 0M663.24 340.54a3.1 1.55 0 1 0 6.2 0a3.1 1.55 0 1 0 -6.2 0M657.80 343.68a3.1 1.55 0 1 0 6.2 0a3.1 1.55 0 1 0 -6.2 0M652.36 346.82a3.1 1.55 0 1 0 6.2 0a3.1 1.55 0 1 0 -6.2 0M646.92 349.96a3.1 1.55 0 1 0 6.2 0a3.1 1.55 0 1 0 -6.2 0M641.48 353.10a3.1 1.55 0 1 0 6.2 0a3.1 1.55 0 1 0 -6.2 0M636.04 356.24a3.1 1.55 0 1 0 6.2 0a3.1 1.55 0 1 0 -6.2 0M733.96 306.00a3.1 1.55 0 1 0 6.2 0a3.1 1.55 0 1 0 -6.2 0M728.52 309.14a3.1 1.55 0 1 0 6.2 0a3.1 1.55 0 1 0 -6.2 0M723.08 312.28a3.1 1.55 0 1 0 6.2 0a3.1 1.55 0 1 0 -6.2 0M717.64 315.42a3.1 1.55 0 1 0 6.2 0a3.1 1.55 0 1 0 -6.2 0M712.20 318.56a3.1 1.55 0 1 0 6.2 0a3.1 1.55 0 1 0 -6.2 0M706.76 321.70a3.1 1.55 0 1 0 6.2 0a3.1 1.55 0 1 0 -6.2 0M701.32 324.84a3.1 1.55 0 1 0 6.2 0a3.1 1.55 0 1 0 -6.2 0M695.88 327.98a3.1 1.55 0 1 0 6.2 0a3.1 1.55 0 1 0 -6.2 0M690.44 331.12a3.1 1.55 0 1 0 6.2 0a3.1 1.55 0 1 0 -6.2 0M685.00 334.26a3.1 1.55 0 1 0 6.2 0a3.1 1.55 0 1 0 -6.2 0M679.56 337.40a3.1 1.55 0 1 0 6.2 0a3.1 1.55 0 1 0 -6.2 0M674.12 340.54a3.1 1.55 0 1 0 6.2 0a3.1 1.55 0 1 0 -6.2 0M668.68 343.68a3.1 1.55 0 1 0 6.2 0a3.1 1.55 0 1 0 -6.2 0M663.24 346.82a3.1 1.55 0 1 0 6.2 0a3.1 1.55 0 1 0 -6.2 0M657.80 349.96a3.1 1.55 0 1 0 6.2 0a3.1 1.55 0 1 0 -6.2 0M652.36 353.10a3.1 1.55 0 1 0 6.2 0a3.1 1.55 0 1 0 -6.2 0M646.92 356.24a3.1 1.55 0 1 0 6.2 0a3.1 1.55 0 1 0 -6.2 0M641.48 359.38a3.1 1.55 0 1 0 6.2 0a3.1 1.55 0 1 0 -6.2 0M739.40 309.14a3.1 1.55 0 1 0 6.2 0a3.1 1.55 0 1 0 -6.2 0M733.96 312.28a3.1 1.55 0 1 0 6.2 0a3.1 1.55 0 1 0 -6.2 0M728.52 315.42a3.1 1.55 0 1 0 6.2 0a3.1 1.55 0 1 0 -6.2 0M723.08 318.56a3.1 1.55 0 1 0 6.2 0a3.1 1.55 0 1 0 -6.2 0M717.64 321.70a3.1 1.55 0 1 0 6.2 0a3.1 1.55 0 1 0 -6.2 0M712.20 324.84a3.1 1.55 0 1 0 6.2 0a3.1 1.55 0 1 0 -6.2 0M706.76 327.98a3.1 1.55 0 1 0 6.2 0a3.1 1.55 0 1 0 -6.2 0M701.32 331.12a3.1 1.55 0 1 0 6.2 0a3.1 1.55 0 1 0 -6.2 0M695.88 334.26a3.1 1.55 0 1 0 6.2 0a3.1 1.55 0 1 0 -6.2 0M690.44 337.40a3.1 1.55 0 1 0 6.2 0a3.1 1.55 0 1 0 -6.2 0M685.00 340.54a3.1 1.55 0 1 0 6.2 0a3.1 1.55 0 1 0 -6.2 0M679.56 343.68a3.1 1.55 0 1 0 6.2 0a3.1 1.55 0 1 0 -6.2 0M674.12 346.82a3.1 1.55 0 1 0 6.2 0a3.1 1.55 0 1 0 -6.2 0M668.68 349.96a3.1 1.55 0 1 0 6.2 0a3.1 1.55 0 1 0 -6.2 0M663.24 353.10a3.1 1.55 0 1 0 6.2 0a3.1 1.55 0 1 0 -6.2 0M657.80 356.24a3.1 1.55 0 1 0 6.2 0a3.1 1.55 0 1 0 -6.2 0M652.36 359.38a3.1 1.55 0 1 0 6.2 0a3.1 1.55 0 1 0 -6.2 0M646.92 362.52a3.1 1.55 0 1 0 6.2 0a3.1 1.55 0 1 0 -6.2 0M744.84 312.28a3.1 1.55 0 1 0 6.2 0a3.1 1.55 0 1 0 -6.2 0M739.40 315.42a3.1 1.55 0 1 0 6.2 0a3.1 1.55 0 1 0 -6.2 0M733.96 318.56a3.1 1.55 0 1 0 6.2 0a3.1 1.55 0 1 0 -6.2 0M728.52 321.70a3.1 1.55 0 1 0 6.2 0a3.1 1.55 0 1 0 -6.2 0M723.08 324.84a3.1 1.55 0 1 0 6.2 0a3.1 1.55 0 1 0 -6.2 0M717.64 327.98a3.1 1.55 0 1 0 6.2 0a3.1 1.55 0 1 0 -6.2 0M712.20 331.12a3.1 1.55 0 1 0 6.2 0a3.1 1.55 0 1 0 -6.2 0M706.76 334.26a3.1 1.55 0 1 0 6.2 0a3.1 1.55 0 1 0 -6.2 0M701.32 337.40a3.1 1.55 0 1 0 6.2 0a3.1 1.55 0 1 0 -6.2 0M695.88 340.54a3.1 1.55 0 1 0 6.2 0a3.1 1.55 0 1 0 -6.2 0M690.44 343.68a3.1 1.55 0 1 0 6.2 0a3.1 1.55 0 1 0 -6.2 0M685.00 346.82a3.1 1.55 0 1 0 6.2 0a3.1 1.55 0 1 0 -6.2 0M679.56 349.96a3.1 1.55 0 1 0 6.2 0a3.1 1.55 0 1 0 -6.2 0M674.12 353.10a3.1 1.55 0 1 0 6.2 0a3.1 1.55 0 1 0 -6.2 0M668.68 356.24a3.1 1.55 0 1 0 6.2 0a3.1 1.55 0 1 0 -6.2 0M663.24 359.38a3.1 1.55 0 1 0 6.2 0a3.1 1.55 0 1 0 -6.2 0M657.80 362.52a3.1 1.55 0 1 0 6.2 0a3.1 1.55 0 1 0 -6.2 0M652.36 365.66a3.1 1.55 0 1 0 6.2 0a3.1 1.55 0 1 0 -6.2 0M750.28 315.42a3.1 1.55 0 1 0 6.2 0a3.1 1.55 0 1 0 -6.2 0M744.84 318.56a3.1 1.55 0 1 0 6.2 0a3.1 1.55 0 1 0 -6.2 0M739.40 321.70a3.1 1.55 0 1 0 6.2 0a3.1 1.55 0 1 0 -6.2 0M733.96 324.84a3.1 1.55 0 1 0 6.2 0a3.1 1.55 0 1 0 -6.2 0M728.52 327.98a3.1 1.55 0 1 0 6.2 0a3.1 1.55 0 1 0 -6.2 0M723.08 331.12a3.1 1.55 0 1 0 6.2 0a3.1 1.55 0 1 0 -6.2 0M717.64 334.26a3.1 1.55 0 1 0 6.2 0a3.1 1.55 0 1 0 -6.2 0M712.20 337.40a3.1 1.55 0 1 0 6.2 0a3.1 1.55 0 1 0 -6.2 0M706.76 340.54a3.1 1.55 0 1 0 6.2 0a3.1 1.55 0 1 0 -6.2 0M701.32 343.68a3.1 1.55 0 1 0 6.2 0a3.1 1.55 0 1 0 -6.2 0M695.88 346.82a3.1 1.55 0 1 0 6.2 0a3.1 1.55 0 1 0 -6.2 0M690.44 349.96a3.1 1.55 0 1 0 6.2 0a3.1 1.55 0 1 0 -6.2 0M685.00 353.10a3.1 1.55 0 1 0 6.2 0a3.1 1.55 0 1 0 -6.2 0M679.56 356.24a3.1 1.55 0 1 0 6.2 0a3.1 1.55 0 1 0 -6.2 0M674.12 359.38a3.1 1.55 0 1 0 6.2 0a3.1 1.55 0 1 0 -6.2 0M668.68 362.52a3.1 1.55 0 1 0 6.2 0a3.1 1.55 0 1 0 -6.2 0M663.24 365.66a3.1 1.55 0 1 0 6.2 0a3.1 1.55 0 1 0 -6.2 0M657.80 368.80a3.1 1.55 0 1 0 6.2 0a3.1 1.55 0 1 0 -6.2 0M755.72 318.56a3.1 1.55 0 1 0 6.2 0a3.1 1.55 0 1 0 -6.2 0M750.28 321.70a3.1 1.55 0 1 0 6.2 0a3.1 1.55 0 1 0 -6.2 0M744.84 324.84a3.1 1.55 0 1 0 6.2 0a3.1 1.55 0 1 0 -6.2 0M739.40 327.98a3.1 1.55 0 1 0 6.2 0a3.1 1.55 0 1 0 -6.2 0M733.96 331.12a3.1 1.55 0 1 0 6.2 0a3.1 1.55 0 1 0 -6.2 0M728.52 334.26a3.1 1.55 0 1 0 6.2 0a3.1 1.55 0 1 0 -6.2 0M723.08 337.40a3.1 1.55 0 1 0 6.2 0a3.1 1.55 0 1 0 -6.2 0M717.64 340.54a3.1 1.55 0 1 0 6.2 0a3.1 1.55 0 1 0 -6.2 0M712.20 343.68a3.1 1.55 0 1 0 6.2 0a3.1 1.55 0 1 0 -6.2 0M706.76 346.82a3.1 1.55 0 1 0 6.2 0a3.1 1.55 0 1 0 -6.2 0M701.32 349.96a3.1 1.55 0 1 0 6.2 0a3.1 1.55 0 1 0 -6.2 0M695.88 353.10a3.1 1.55 0 1 0 6.2 0a3.1 1.55 0 1 0 -6.2 0M690.44 356.24a3.1 1.55 0 1 0 6.2 0a3.1 1.55 0 1 0 -6.2 0M685.00 359.38a3.1 1.55 0 1 0 6.2 0a3.1 1.55 0 1 0 -6.2 0M679.56 362.52a3.1 1.55 0 1 0 6.2 0a3.1 1.55 0 1 0 -6.2 0M674.12 365.66a3.1 1.55 0 1 0 6.2 0a3.1 1.55 0 1 0 -6.2 0M668.68 368.80a3.1 1.55 0 1 0 6.2 0a3.1 1.55 0 1 0 -6.2 0M663.24 371.94a3.1 1.55 0 1 0 6.2 0a3.1 1.55 0 1 0 -6.2 0M761.16 321.70a3.1 1.55 0 1 0 6.2 0a3.1 1.55 0 1 0 -6.2 0M755.72 324.84a3.1 1.55 0 1 0 6.2 0a3.1 1.55 0 1 0 -6.2 0M750.28 327.98a3.1 1.55 0 1 0 6.2 0a3.1 1.55 0 1 0 -6.2 0M744.84 331.12a3.1 1.55 0 1 0 6.2 0a3.1 1.55 0 1 0 -6.2 0M739.40 334.26a3.1 1.55 0 1 0 6.2 0a3.1 1.55 0 1 0 -6.2 0M733.96 337.40a3.1 1.55 0 1 0 6.2 0a3.1 1.55 0 1 0 -6.2 0M728.52 340.54a3.1 1.55 0 1 0 6.2 0a3.1 1.55 0 1 0 -6.2 0M723.08 343.68a3.1 1.55 0 1 0 6.2 0a3.1 1.55 0 1 0 -6.2 0M717.64 346.82a3.1 1.55 0 1 0 6.2 0a3.1 1.55 0 1 0 -6.2 0M712.20 349.96a3.1 1.55 0 1 0 6.2 0a3.1 1.55 0 1 0 -6.2 0M706.76 353.10a3.1 1.55 0 1 0 6.2 0a3.1 1.55 0 1 0 -6.2 0M701.32 356.24a3.1 1.55 0 1 0 6.2 0a3.1 1.55 0 1 0 -6.2 0M695.88 359.38a3.1 1.55 0 1 0 6.2 0a3.1 1.55 0 1 0 -6.2 0M690.44 362.52a3.1 1.55 0 1 0 6.2 0a3.1 1.55 0 1 0 -6.2 0M685.00 365.66a3.1 1.55 0 1 0 6.2 0a3.1 1.55 0 1 0 -6.2 0M679.56 368.80a3.1 1.55 0 1 0 6.2 0a3.1 1.55 0 1 0 -6.2 0M674.12 371.94a3.1 1.55 0 1 0 6.2 0a3.1 1.55 0 1 0 -6.2 0M668.68 375.08a3.1 1.55 0 1 0 6.2 0a3.1 1.55 0 1 0 -6.2 0M766.60 324.84a3.1 1.55 0 1 0 6.2 0a3.1 1.55 0 1 0 -6.2 0M761.16 327.98a3.1 1.55 0 1 0 6.2 0a3.1 1.55 0 1 0 -6.2 0M755.72 331.12a3.1 1.55 0 1 0 6.2 0a3.1 1.55 0 1 0 -6.2 0M750.28 334.26a3.1 1.55 0 1 0 6.2 0a3.1 1.55 0 1 0 -6.2 0M744.84 337.40a3.1 1.55 0 1 0 6.2 0a3.1 1.55 0 1 0 -6.2 0M739.40 340.54a3.1 1.55 0 1 0 6.2 0a3.1 1.55 0 1 0 -6.2 0M733.96 343.68a3.1 1.55 0 1 0 6.2 0a3.1 1.55 0 1 0 -6.2 0M728.52 346.82a3.1 1.55 0 1 0 6.2 0a3.1 1.55 0 1 0 -6.2 0M723.08 349.96a3.1 1.55 0 1 0 6.2 0a3.1 1.55 0 1 0 -6.2 0M717.64 353.10a3.1 1.55 0 1 0 6.2 0a3.1 1.55 0 1 0 -6.2 0M712.20 356.24a3.1 1.55 0 1 0 6.2 0a3.1 1.55 0 1 0 -6.2 0M706.76 359.38a3.1 1.55 0 1 0 6.2 0a3.1 1.55 0 1 0 -6.2 0M701.32 362.52a3.1 1.55 0 1 0 6.2 0a3.1 1.55 0 1 0 -6.2 0M695.88 365.66a3.1 1.55 0 1 0 6.2 0a3.1 1.55 0 1 0 -6.2 0M690.44 368.80a3.1 1.55 0 1 0 6.2 0a3.1 1.55 0 1 0 -6.2 0M685.00 371.94a3.1 1.55 0 1 0 6.2 0a3.1 1.55 0 1 0 -6.2 0M679.56 375.08a3.1 1.55 0 1 0 6.2 0a3.1 1.55 0 1 0 -6.2 0M674.12 378.22a3.1 1.55 0 1 0 6.2 0a3.1 1.55 0 1 0 -6.2 0M772.04 327.98a3.1 1.55 0 1 0 6.2 0a3.1 1.55 0 1 0 -6.2 0M766.60 331.12a3.1 1.55 0 1 0 6.2 0a3.1 1.55 0 1 0 -6.2 0M761.16 334.26a3.1 1.55 0 1 0 6.2 0a3.1 1.55 0 1 0 -6.2 0M755.72 337.40a3.1 1.55 0 1 0 6.2 0a3.1 1.55 0 1 0 -6.2 0M750.28 340.54a3.1 1.55 0 1 0 6.2 0a3.1 1.55 0 1 0 -6.2 0M744.84 343.68a3.1 1.55 0 1 0 6.2 0a3.1 1.55 0 1 0 -6.2 0M739.40 346.82a3.1 1.55 0 1 0 6.2 0a3.1 1.55 0 1 0 -6.2 0M733.96 349.96a3.1 1.55 0 1 0 6.2 0a3.1 1.55 0 1 0 -6.2 0M728.52 353.10a3.1 1.55 0 1 0 6.2 0a3.1 1.55 0 1 0 -6.2 0M723.08 356.24a3.1 1.55 0 1 0 6.2 0a3.1 1.55 0 1 0 -6.2 0M717.64 359.38a3.1 1.55 0 1 0 6.2 0a3.1 1.55 0 1 0 -6.2 0M712.20 362.52a3.1 1.55 0 1 0 6.2 0a3.1 1.55 0 1 0 -6.2 0M706.76 365.66a3.1 1.55 0 1 0 6.2 0a3.1 1.55 0 1 0 -6.2 0M701.32 368.80a3.1 1.55 0 1 0 6.2 0a3.1 1.55 0 1 0 -6.2 0M695.88 371.94a3.1 1.55 0 1 0 6.2 0a3.1 1.55 0 1 0 -6.2 0M690.44 375.08a3.1 1.55 0 1 0 6.2 0a3.1 1.55 0 1 0 -6.2 0M685.00 378.22a3.1 1.55 0 1 0 6.2 0a3.1 1.55 0 1 0 -6.2 0M679.56 381.36a3.1 1.55 0 1 0 6.2 0a3.1 1.55 0 1 0 -6.2 0M777.48 331.12a3.1 1.55 0 1 0 6.2 0a3.1 1.55 0 1 0 -6.2 0M772.04 334.26a3.1 1.55 0 1 0 6.2 0a3.1 1.55 0 1 0 -6.2 0M766.60 337.40a3.1 1.55 0 1 0 6.2 0a3.1 1.55 0 1 0 -6.2 0M761.16 340.54a3.1 1.55 0 1 0 6.2 0a3.1 1.55 0 1 0 -6.2 0M755.72 343.68a3.1 1.55 0 1 0 6.2 0a3.1 1.55 0 1 0 -6.2 0M750.28 346.82a3.1 1.55 0 1 0 6.2 0a3.1 1.55 0 1 0 -6.2 0M744.84 349.96a3.1 1.55 0 1 0 6.2 0a3.1 1.55 0 1 0 -6.2 0M739.40 353.10a3.1 1.55 0 1 0 6.2 0a3.1 1.55 0 1 0 -6.2 0M733.96 356.24a3.1 1.55 0 1 0 6.2 0a3.1 1.55 0 1 0 -6.2 0M728.52 359.38a3.1 1.55 0 1 0 6.2 0a3.1 1.55 0 1 0 -6.2 0M723.08 362.52a3.1 1.55 0 1 0 6.2 0a3.1 1.55 0 1 0 -6.2 0M717.64 365.66a3.1 1.55 0 1 0 6.2 0a3.1 1.55 0 1 0 -6.2 0M712.20 368.80a3.1 1.55 0 1 0 6.2 0a3.1 1.55 0 1 0 -6.2 0M706.76 371.94a3.1 1.55 0 1 0 6.2 0a3.1 1.55 0 1 0 -6.2 0M701.32 375.08a3.1 1.55 0 1 0 6.2 0a3.1 1.55 0 1 0 -6.2 0M695.88 378.22a3.1 1.55 0 1 0 6.2 0a3.1 1.55 0 1 0 -6.2 0M690.44 381.36a3.1 1.55 0 1 0 6.2 0a3.1 1.55 0 1 0 -6.2 0M685.00 384.50a3.1 1.55 0 1 0 6.2 0a3.1 1.55 0 1 0 -6.2 0M782.92 334.26a3.1 1.55 0 1 0 6.2 0a3.1 1.55 0 1 0 -6.2 0M777.48 337.40a3.1 1.55 0 1 0 6.2 0a3.1 1.55 0 1 0 -6.2 0M772.04 340.54a3.1 1.55 0 1 0 6.2 0a3.1 1.55 0 1 0 -6.2 0M766.60 343.68a3.1 1.55 0 1 0 6.2 0a3.1 1.55 0 1 0 -6.2 0M761.16 346.82a3.1 1.55 0 1 0 6.2 0a3.1 1.55 0 1 0 -6.2 0M755.72 349.96a3.1 1.55 0 1 0 6.2 0a3.1 1.55 0 1 0 -6.2 0M750.28 353.10a3.1 1.55 0 1 0 6.2 0a3.1 1.55 0 1 0 -6.2 0M744.84 356.24a3.1 1.55 0 1 0 6.2 0a3.1 1.55 0 1 0 -6.2 0M739.40 359.38a3.1 1.55 0 1 0 6.2 0a3.1 1.55 0 1 0 -6.2 0M733.96 362.52a3.1 1.55 0 1 0 6.2 0a3.1 1.55 0 1 0 -6.2 0M728.52 365.66a3.1 1.55 0 1 0 6.2 0a3.1 1.55 0 1 0 -6.2 0M723.08 368.80a3.1 1.55 0 1 0 6.2 0a3.1 1.55 0 1 0 -6.2 0M717.64 371.94a3.1 1.55 0 1 0 6.2 0a3.1 1.55 0 1 0 -6.2 0M712.20 375.08a3.1 1.55 0 1 0 6.2 0a3.1 1.55 0 1 0 -6.2 0M706.76 378.22a3.1 1.55 0 1 0 6.2 0a3.1 1.55 0 1 0 -6.2 0M701.32 381.36a3.1 1.55 0 1 0 6.2 0a3.1 1.55 0 1 0 -6.2 0M695.88 384.50a3.1 1.55 0 1 0 6.2 0a3.1 1.55 0 1 0 -6.2 0M690.44 387.64a3.1 1.55 0 1 0 6.2 0a3.1 1.55 0 1 0 -6.2 0M788.36 337.40a3.1 1.55 0 1 0 6.2 0a3.1 1.55 0 1 0 -6.2 0M782.92 340.54a3.1 1.55 0 1 0 6.2 0a3.1 1.55 0 1 0 -6.2 0M777.48 343.68a3.1 1.55 0 1 0 6.2 0a3.1 1.55 0 1 0 -6.2 0M772.04 346.82a3.1 1.55 0 1 0 6.2 0a3.1 1.55 0 1 0 -6.2 0M766.60 349.96a3.1 1.55 0 1 0 6.2 0a3.1 1.55 0 1 0 -6.2 0M761.16 353.10a3.1 1.55 0 1 0 6.2 0a3.1 1.55 0 1 0 -6.2 0M755.72 356.24a3.1 1.55 0 1 0 6.2 0a3.1 1.55 0 1 0 -6.2 0M750.28 359.38a3.1 1.55 0 1 0 6.2 0a3.1 1.55 0 1 0 -6.2 0M744.84 362.52a3.1 1.55 0 1 0 6.2 0a3.1 1.55 0 1 0 -6.2 0M739.40 365.66a3.1 1.55 0 1 0 6.2 0a3.1 1.55 0 1 0 -6.2 0M733.96 368.80a3.1 1.55 0 1 0 6.2 0a3.1 1.55 0 1 0 -6.2 0M728.52 371.94a3.1 1.55 0 1 0 6.2 0a3.1 1.55 0 1 0 -6.2 0M723.08 375.08a3.1 1.55 0 1 0 6.2 0a3.1 1.55 0 1 0 -6.2 0M717.64 378.22a3.1 1.55 0 1 0 6.2 0a3.1 1.55 0 1 0 -6.2 0M712.20 381.36a3.1 1.55 0 1 0 6.2 0a3.1 1.55 0 1 0 -6.2 0M706.76 384.50a3.1 1.55 0 1 0 6.2 0a3.1 1.55 0 1 0 -6.2 0M701.32 387.64a3.1 1.55 0 1 0 6.2 0a3.1 1.55 0 1 0 -6.2 0M695.88 390.78a3.1 1.55 0 1 0 6.2 0a3.1 1.55 0 1 0 -6.2 0M793.80 340.54a3.1 1.55 0 1 0 6.2 0a3.1 1.55 0 1 0 -6.2 0M788.36 343.68a3.1 1.55 0 1 0 6.2 0a3.1 1.55 0 1 0 -6.2 0M782.92 346.82a3.1 1.55 0 1 0 6.2 0a3.1 1.55 0 1 0 -6.2 0M777.48 349.96a3.1 1.55 0 1 0 6.2 0a3.1 1.55 0 1 0 -6.2 0M772.04 353.10a3.1 1.55 0 1 0 6.2 0a3.1 1.55 0 1 0 -6.2 0M766.60 356.24a3.1 1.55 0 1 0 6.2 0a3.1 1.55 0 1 0 -6.2 0M761.16 359.38a3.1 1.55 0 1 0 6.2 0a3.1 1.55 0 1 0 -6.2 0M755.72 362.52a3.1 1.55 0 1 0 6.2 0a3.1 1.55 0 1 0 -6.2 0M750.28 365.66a3.1 1.55 0 1 0 6.2 0a3.1 1.55 0 1 0 -6.2 0M744.84 368.80a3.1 1.55 0 1 0 6.2 0a3.1 1.55 0 1 0 -6.2 0M739.40 371.94a3.1 1.55 0 1 0 6.2 0a3.1 1.55 0 1 0 -6.2 0M733.96 375.08a3.1 1.55 0 1 0 6.2 0a3.1 1.55 0 1 0 -6.2 0M728.52 378.22a3.1 1.55 0 1 0 6.2 0a3.1 1.55 0 1 0 -6.2 0M723.08 381.36a3.1 1.55 0 1 0 6.2 0a3.1 1.55 0 1 0 -6.2 0M717.64 384.50a3.1 1.55 0 1 0 6.2 0a3.1 1.55 0 1 0 -6.2 0M712.20 387.64a3.1 1.55 0 1 0 6.2 0a3.1 1.55 0 1 0 -6.2 0M706.76 390.78a3.1 1.55 0 1 0 6.2 0a3.1 1.55 0 1 0 -6.2 0M701.32 393.92a3.1 1.55 0 1 0 6.2 0a3.1 1.55 0 1 0 -6.2 0M799.24 343.68a3.1 1.55 0 1 0 6.2 0a3.1 1.55 0 1 0 -6.2 0M793.80 346.82a3.1 1.55 0 1 0 6.2 0a3.1 1.55 0 1 0 -6.2 0M788.36 349.96a3.1 1.55 0 1 0 6.2 0a3.1 1.55 0 1 0 -6.2 0M782.92 353.10a3.1 1.55 0 1 0 6.2 0a3.1 1.55 0 1 0 -6.2 0M777.48 356.24a3.1 1.55 0 1 0 6.2 0a3.1 1.55 0 1 0 -6.2 0M772.04 359.38a3.1 1.55 0 1 0 6.2 0a3.1 1.55 0 1 0 -6.2 0M766.60 362.52a3.1 1.55 0 1 0 6.2 0a3.1 1.55 0 1 0 -6.2 0M761.16 365.66a3.1 1.55 0 1 0 6.2 0a3.1 1.55 0 1 0 -6.2 0M755.72 368.80a3.1 1.55 0 1 0 6.2 0a3.1 1.55 0 1 0 -6.2 0M750.28 371.94a3.1 1.55 0 1 0 6.2 0a3.1 1.55 0 1 0 -6.2 0M744.84 375.08a3.1 1.55 0 1 0 6.2 0a3.1 1.55 0 1 0 -6.2 0M739.40 378.22a3.1 1.55 0 1 0 6.2 0a3.1 1.55 0 1 0 -6.2 0M733.96 381.36a3.1 1.55 0 1 0 6.2 0a3.1 1.55 0 1 0 -6.2 0M728.52 384.50a3.1 1.55 0 1 0 6.2 0a3.1 1.55 0 1 0 -6.2 0M723.08 387.64a3.1 1.55 0 1 0 6.2 0a3.1 1.55 0 1 0 -6.2 0M717.64 390.78a3.1 1.55 0 1 0 6.2 0a3.1 1.55 0 1 0 -6.2 0M712.20 393.92a3.1 1.55 0 1 0 6.2 0a3.1 1.55 0 1 0 -6.2 0M706.76 397.06a3.1 1.55 0 1 0 6.2 0a3.1 1.55 0 1 0 -6.2 0M804.68 346.82a3.1 1.55 0 1 0 6.2 0a3.1 1.55 0 1 0 -6.2 0M799.24 349.96a3.1 1.55 0 1 0 6.2 0a3.1 1.55 0 1 0 -6.2 0M793.80 353.10a3.1 1.55 0 1 0 6.2 0a3.1 1.55 0 1 0 -6.2 0M788.36 356.24a3.1 1.55 0 1 0 6.2 0a3.1 1.55 0 1 0 -6.2 0M782.92 359.38a3.1 1.55 0 1 0 6.2 0a3.1 1.55 0 1 0 -6.2 0M777.48 362.52a3.1 1.55 0 1 0 6.2 0a3.1 1.55 0 1 0 -6.2 0M772.04 365.66a3.1 1.55 0 1 0 6.2 0a3.1 1.55 0 1 0 -6.2 0M766.60 368.80a3.1 1.55 0 1 0 6.2 0a3.1 1.55 0 1 0 -6.2 0M761.16 371.94a3.1 1.55 0 1 0 6.2 0a3.1 1.55 0 1 0 -6.2 0M755.72 375.08a3.1 1.55 0 1 0 6.2 0a3.1 1.55 0 1 0 -6.2 0M750.28 378.22a3.1 1.55 0 1 0 6.2 0a3.1 1.55 0 1 0 -6.2 0M744.84 381.36a3.1 1.55 0 1 0 6.2 0a3.1 1.55 0 1 0 -6.2 0M739.40 384.50a3.1 1.55 0 1 0 6.2 0a3.1 1.55 0 1 0 -6.2 0M733.96 387.64a3.1 1.55 0 1 0 6.2 0a3.1 1.55 0 1 0 -6.2 0M728.52 390.78a3.1 1.55 0 1 0 6.2 0a3.1 1.55 0 1 0 -6.2 0M723.08 393.92a3.1 1.55 0 1 0 6.2 0a3.1 1.55 0 1 0 -6.2 0M717.64 397.06a3.1 1.55 0 1 0 6.2 0a3.1 1.55 0 1 0 -6.2 0M712.20 400.20a3.1 1.55 0 1 0 6.2 0a3.1 1.55 0 1 0 -6.2 0" fill="#fff" fill-opacity="0.96" stroke="#76849e" stroke-width="0.5"/>
<path d="M714.00 293.44h2.6M708.56 296.58h2.6M703.12 299.72h2.6M697.68 302.86h2.6M692.24 306.00h2.6M686.80 309.14h2.6M681.36 312.28h2.6M675.92 315.42h2.6M670.48 318.56h2.6M665.04 321.70h2.6M659.60 324.84h2.6M654.16 327.98h2.6M648.72 331.12h2.6M643.28 334.26h2.6M637.84 337.40h2.6M632.40 340.54h2.6M626.96 343.68h2.6M621.52 346.82h2.6M719.44 296.58h2.6M714.00 299.72h2.6M708.56 302.86h2.6M703.12 306.00h2.6M697.68 309.14h2.6M692.24 312.28h2.6M686.80 315.42h2.6M681.36 318.56h2.6M675.92 321.70h2.6M670.48 324.84h2.6M665.04 327.98h2.6M659.60 331.12h2.6M654.16 334.26h2.6M648.72 337.40h2.6M643.28 340.54h2.6M637.84 343.68h2.6M632.40 346.82h2.6M626.96 349.96h2.6M724.88 299.72h2.6M719.44 302.86h2.6M714.00 306.00h2.6M708.56 309.14h2.6M703.12 312.28h2.6M697.68 315.42h2.6M692.24 318.56h2.6M686.80 321.70h2.6M681.36 324.84h2.6M675.92 327.98h2.6M670.48 331.12h2.6M665.04 334.26h2.6M659.60 337.40h2.6M654.16 340.54h2.6M648.72 343.68h2.6M643.28 346.82h2.6M637.84 349.96h2.6M632.40 353.10h2.6M730.32 302.86h2.6M724.88 306.00h2.6M719.44 309.14h2.6M714.00 312.28h2.6M708.56 315.42h2.6M703.12 318.56h2.6M697.68 321.70h2.6M692.24 324.84h2.6M686.80 327.98h2.6M681.36 331.12h2.6M675.92 334.26h2.6M670.48 337.40h2.6M665.04 340.54h2.6M659.60 343.68h2.6M654.16 346.82h2.6M648.72 349.96h2.6M643.28 353.10h2.6M637.84 356.24h2.6M735.76 306.00h2.6M730.32 309.14h2.6M724.88 312.28h2.6M719.44 315.42h2.6M714.00 318.56h2.6M708.56 321.70h2.6M703.12 324.84h2.6M697.68 327.98h2.6M692.24 331.12h2.6M686.80 334.26h2.6M681.36 337.40h2.6M675.92 340.54h2.6M670.48 343.68h2.6M665.04 346.82h2.6M659.60 349.96h2.6M654.16 353.10h2.6M648.72 356.24h2.6M643.28 359.38h2.6M741.20 309.14h2.6M735.76 312.28h2.6M730.32 315.42h2.6M724.88 318.56h2.6M719.44 321.70h2.6M714.00 324.84h2.6M708.56 327.98h2.6M703.12 331.12h2.6M697.68 334.26h2.6M692.24 337.40h2.6M686.80 340.54h2.6M681.36 343.68h2.6M675.92 346.82h2.6M670.48 349.96h2.6M665.04 353.10h2.6M659.60 356.24h2.6M654.16 359.38h2.6M648.72 362.52h2.6M746.64 312.28h2.6M741.20 315.42h2.6M735.76 318.56h2.6M730.32 321.70h2.6M724.88 324.84h2.6M719.44 327.98h2.6M714.00 331.12h2.6M708.56 334.26h2.6M703.12 337.40h2.6M697.68 340.54h2.6M692.24 343.68h2.6M686.80 346.82h2.6M681.36 349.96h2.6M675.92 353.10h2.6M670.48 356.24h2.6M665.04 359.38h2.6M659.60 362.52h2.6M654.16 365.66h2.6M752.08 315.42h2.6M746.64 318.56h2.6M741.20 321.70h2.6M735.76 324.84h2.6M730.32 327.98h2.6M724.88 331.12h2.6M719.44 334.26h2.6M714.00 337.40h2.6M708.56 340.54h2.6M703.12 343.68h2.6M697.68 346.82h2.6M692.24 349.96h2.6M686.80 353.10h2.6M681.36 356.24h2.6M675.92 359.38h2.6M670.48 362.52h2.6M665.04 365.66h2.6M659.60 368.80h2.6M757.52 318.56h2.6M752.08 321.70h2.6M746.64 324.84h2.6M741.20 327.98h2.6M735.76 331.12h2.6M730.32 334.26h2.6M724.88 337.40h2.6M719.44 340.54h2.6M714.00 343.68h2.6M708.56 346.82h2.6M703.12 349.96h2.6M697.68 353.10h2.6M692.24 356.24h2.6M686.80 359.38h2.6M681.36 362.52h2.6M675.92 365.66h2.6M670.48 368.80h2.6M665.04 371.94h2.6M762.96 321.70h2.6M757.52 324.84h2.6M752.08 327.98h2.6M746.64 331.12h2.6M741.20 334.26h2.6M735.76 337.40h2.6M730.32 340.54h2.6M724.88 343.68h2.6M719.44 346.82h2.6M714.00 349.96h2.6M708.56 353.10h2.6M703.12 356.24h2.6M697.68 359.38h2.6M692.24 362.52h2.6M686.80 365.66h2.6M681.36 368.80h2.6M675.92 371.94h2.6M670.48 375.08h2.6M768.40 324.84h2.6M762.96 327.98h2.6M757.52 331.12h2.6M752.08 334.26h2.6M746.64 337.40h2.6M741.20 340.54h2.6M735.76 343.68h2.6M730.32 346.82h2.6M724.88 349.96h2.6M719.44 353.10h2.6M714.00 356.24h2.6M708.56 359.38h2.6M703.12 362.52h2.6M697.68 365.66h2.6M692.24 368.80h2.6M686.80 371.94h2.6M681.36 375.08h2.6M675.92 378.22h2.6M773.84 327.98h2.6M768.40 331.12h2.6M762.96 334.26h2.6M757.52 337.40h2.6M752.08 340.54h2.6M746.64 343.68h2.6M741.20 346.82h2.6M735.76 349.96h2.6M730.32 353.10h2.6M724.88 356.24h2.6M719.44 359.38h2.6M714.00 362.52h2.6M708.56 365.66h2.6M703.12 368.80h2.6M697.68 371.94h2.6M692.24 375.08h2.6M686.80 378.22h2.6M681.36 381.36h2.6M779.28 331.12h2.6M773.84 334.26h2.6M768.40 337.40h2.6M762.96 340.54h2.6M757.52 343.68h2.6M752.08 346.82h2.6M746.64 349.96h2.6M741.20 353.10h2.6M735.76 356.24h2.6M730.32 359.38h2.6M724.88 362.52h2.6M719.44 365.66h2.6M714.00 368.80h2.6M708.56 371.94h2.6M703.12 375.08h2.6M697.68 378.22h2.6M692.24 381.36h2.6M686.80 384.50h2.6M784.72 334.26h2.6M779.28 337.40h2.6M773.84 340.54h2.6M768.40 343.68h2.6M762.96 346.82h2.6M757.52 349.96h2.6M752.08 353.10h2.6M746.64 356.24h2.6M741.20 359.38h2.6M735.76 362.52h2.6M730.32 365.66h2.6M724.88 368.80h2.6M719.44 371.94h2.6M714.00 375.08h2.6M708.56 378.22h2.6M703.12 381.36h2.6M697.68 384.50h2.6M692.24 387.64h2.6M790.16 337.40h2.6M784.72 340.54h2.6M779.28 343.68h2.6M773.84 346.82h2.6M768.40 349.96h2.6M762.96 353.10h2.6M757.52 356.24h2.6M752.08 359.38h2.6M746.64 362.52h2.6M741.20 365.66h2.6M735.76 368.80h2.6M730.32 371.94h2.6M724.88 375.08h2.6M719.44 378.22h2.6M714.00 381.36h2.6M708.56 384.50h2.6M703.12 387.64h2.6M697.68 390.78h2.6M795.60 340.54h2.6M790.16 343.68h2.6M784.72 346.82h2.6M779.28 349.96h2.6M773.84 353.10h2.6M768.40 356.24h2.6M762.96 359.38h2.6M757.52 362.52h2.6M752.08 365.66h2.6M746.64 368.80h2.6M741.20 371.94h2.6M735.76 375.08h2.6M730.32 378.22h2.6M724.88 381.36h2.6M719.44 384.50h2.6M714.00 387.64h2.6M708.56 390.78h2.6M703.12 393.92h2.6M801.04 343.68h2.6M795.60 346.82h2.6M790.16 349.96h2.6M784.72 353.10h2.6M779.28 356.24h2.6M773.84 359.38h2.6M768.40 362.52h2.6M762.96 365.66h2.6M757.52 368.80h2.6M752.08 371.94h2.6M746.64 375.08h2.6M741.20 378.22h2.6M735.76 381.36h2.6M730.32 384.50h2.6M724.88 387.64h2.6M719.44 390.78h2.6M714.00 393.92h2.6M708.56 397.06h2.6M806.48 346.82h2.6M801.04 349.96h2.6M795.60 353.10h2.6M790.16 356.24h2.6M784.72 359.38h2.6M779.28 362.52h2.6M773.84 365.66h2.6M768.40 368.80h2.6M762.96 371.94h2.6M757.52 375.08h2.6M752.08 378.22h2.6M746.64 381.36h2.6M741.20 384.50h2.6M735.76 387.64h2.6M730.32 390.78h2.6M724.88 393.92h2.6M719.44 397.06h2.6M714.00 400.20h2.6" stroke="#4a78c2" stroke-width="0.5"/>
<path d="M715.3 252.6L715.3 328.0M666.3 280.9L666.3 356.3M617.4 309.1L617.4 384.5M764.3 280.9L764.3 356.3M715.3 309.1L715.3 384.5M666.3 337.4L666.3 412.8M813.2 309.1L813.2 384.5M764.3 337.4L764.3 412.8M715.3 365.6L715.3 403.3M862.2 337.4L862.2 375.1M813.2 385.3L813.2 403.3M715.3 252.6L862.2 337.4M715.3 252.6L617.4 309.1M617.4 309.1L715.3 365.6M666.3 280.9L764.3 337.4M682.7 290.3L633.7 318.5M699.0 299.7L650.0 328.0M780.6 290.3L682.7 346.8M796.9 299.7L699.0 356.2M813.2 309.1L715.3 365.6M829.5 318.5L780.6 346.8M845.9 328.0L796.9 356.2M862.2 337.4L813.2 365.6M715.3 309.1L666.3 337.4M796.9 356.2L845.9 384.5M780.6 365.7L829.5 393.9M764.3 375.1L813.2 403.3M747.9 384.5L796.9 412.8M731.6 393.9L780.6 422.2M813.2 403.3L764.3 431.6M813.2 365.3L862.2 337.4M813.2 365.3L862.2 375.1M862.2 337.4L813.2 403.3M813.2 365.3L845.9 384.2M756.0 351.0L718.0 398.8M723.0 367.5L759.3 374.9M715.3 206.9L715.3 309.1M666.3 280.9L688.1 243.6M764.3 280.9L742.6 243.6M688.1 243.6L706.3 212.3M742.6 243.6L724.3 212.3M688.1 243.6L715.3 227.7M742.6 243.6L715.3 227.7M688.1 243.6L715.3 259.2M742.6 243.6L715.3 259.2M715.3 206.9L706.3 212.3M715.3 206.9L724.3 212.3M706.3 212.3L715.3 217.6M724.3 212.3L715.3 217.6M706.3 212.3L715.3 259.2M724.3 212.3L715.3 259.2M688.1 243.6L715.3 217.6M742.6 243.6L715.3 217.6M688.1 243.6L715.3 309.1M742.6 243.6L715.3 309.1M666.3 280.9L715.3 259.2M764.3 280.9L715.3 259.2M688.1 243.6L715.3 252.6M742.6 243.6L715.3 252.6M715.3 412.6L666.3 440.9M739.8 426.8L690.8 455.0M764.3 440.9L715.3 469.2M715.3 412.6L764.3 440.9M705.5 418.3L754.5 446.6M695.7 423.9L744.7 452.2M685.9 429.6L734.9 457.9M676.1 435.2L725.1 463.5M666.3 440.9L715.3 469.2M666.3 440.9L666.3 469.3M715.3 469.2L715.3 492.6" fill="none" stroke="#4c4c4c" stroke-width="0.9" opacity="0.62" clip-path="url(#mclip)"/>
<g opacity="0.6">
<circle cx="715.3" cy="328.0" r="1.3" fill="#1f8a2a"/><path d="M715.3 328.0l-3.5 4.8h7z" fill="none" stroke="#2e9a3a" stroke-width="1.2"/><path d="M710.3 333.4h10M710.7 335.6l1.4-2M712.9 335.6l1.4-2M715.1 335.6l1.4-2M717.3 335.6l1.4-2M719.5 335.6l1.4-2" stroke="#2e9a3a" stroke-width="1"/>
<circle cx="666.3" cy="356.3" r="1.3" fill="#1f8a2a"/><path d="M666.3 356.3l-3.5 4.8h7z" fill="none" stroke="#2e9a3a" stroke-width="1.2"/><path d="M661.3 361.7h10M661.7 363.9l1.4-2M663.9 363.9l1.4-2M666.1 363.9l1.4-2M668.3 363.9l1.4-2M670.5 363.9l1.4-2" stroke="#2e9a3a" stroke-width="1"/>
<circle cx="715.3" cy="384.5" r="1.3" fill="#1f8a2a"/><path d="M715.3 384.5l-3.5 4.8h7z" fill="none" stroke="#2e9a3a" stroke-width="1.2"/><path d="M710.3 389.9h10M710.7 392.1l1.4-2M712.9 392.1l1.4-2M715.1 392.1l1.4-2M717.3 392.1l1.4-2M719.5 392.1l1.4-2" stroke="#2e9a3a" stroke-width="1"/>
<circle cx="764.3" cy="356.3" r="1.3" fill="#1f8a2a"/><path d="M764.3 356.3l-3.5 4.8h7z" fill="none" stroke="#2e9a3a" stroke-width="1.2"/><path d="M759.3 361.7h10M759.7 363.9l1.4-2M761.9 363.9l1.4-2M764.1 363.9l1.4-2M766.3 363.9l1.4-2M768.5 363.9l1.4-2" stroke="#2e9a3a" stroke-width="1"/>
</g>
<path d="M714.00 290.30a1.3 1.3 0 1 0 2.6 0a1.3 1.3 0 1 0 -2.6 0M708.56 293.44a1.3 1.3 0 1 0 2.6 0a1.3 1.3 0 1 0 -2.6 0M703.12 296.58a1.3 1.3 0 1 0 2.6 0a1.3 1.3 0 1 0 -2.6 0M697.68 299.72a1.3 1.3 0 1 0 2.6 0a1.3 1.3 0 1 0 -2.6 0M692.24 302.86a1.3 1.3 0 1 0 2.6 0a1.3 1.3 0 1 0 -2.6 0M686.80 306.00a1.3 1.3 0 1 0 2.6 0a1.3 1.3 0 1 0 -2.6 0M681.36 309.14a1.3 1.3 0 1 0 2.6 0a1.3 1.3 0 1 0 -2.6 0M675.92 312.28a1.3 1.3 0 1 0 2.6 0a1.3 1.3 0 1 0 -2.6 0M670.48 315.42a1.3 1.3 0 1 0 2.6 0a1.3 1.3 0 1 0 -2.6 0M665.04 318.56a1.3 1.3 0 1 0 2.6 0a1.3 1.3 0 1 0 -2.6 0M659.60 321.70a1.3 1.3 0 1 0 2.6 0a1.3 1.3 0 1 0 -2.6 0M654.16 324.84a1.3 1.3 0 1 0 2.6 0a1.3 1.3 0 1 0 -2.6 0M648.72 327.98a1.3 1.3 0 1 0 2.6 0a1.3 1.3 0 1 0 -2.6 0M643.28 331.12a1.3 1.3 0 1 0 2.6 0a1.3 1.3 0 1 0 -2.6 0M637.84 334.26a1.3 1.3 0 1 0 2.6 0a1.3 1.3 0 1 0 -2.6 0M632.40 337.40a1.3 1.3 0 1 0 2.6 0a1.3 1.3 0 1 0 -2.6 0M626.96 340.54a1.3 1.3 0 1 0 2.6 0a1.3 1.3 0 1 0 -2.6 0M621.52 343.68a1.3 1.3 0 1 0 2.6 0a1.3 1.3 0 1 0 -2.6 0M616.08 346.82a1.3 1.3 0 1 0 2.6 0a1.3 1.3 0 1 0 -2.6 0M719.44 293.44a1.3 1.3 0 1 0 2.6 0a1.3 1.3 0 1 0 -2.6 0M714.00 296.58a1.3 1.3 0 1 0 2.6 0a1.3 1.3 0 1 0 -2.6 0M708.56 299.72a1.3 1.3 0 1 0 2.6 0a1.3 1.3 0 1 0 -2.6 0M703.12 302.86a1.3 1.3 0 1 0 2.6 0a1.3 1.3 0 1 0 -2.6 0M697.68 306.00a1.3 1.3 0 1 0 2.6 0a1.3 1.3 0 1 0 -2.6 0M692.24 309.14a1.3 1.3 0 1 0 2.6 0a1.3 1.3 0 1 0 -2.6 0M686.80 312.28a1.3 1.3 0 1 0 2.6 0a1.3 1.3 0 1 0 -2.6 0M681.36 315.42a1.3 1.3 0 1 0 2.6 0a1.3 1.3 0 1 0 -2.6 0M675.92 318.56a1.3 1.3 0 1 0 2.6 0a1.3 1.3 0 1 0 -2.6 0M670.48 321.70a1.3 1.3 0 1 0 2.6 0a1.3 1.3 0 1 0 -2.6 0M665.04 324.84a1.3 1.3 0 1 0 2.6 0a1.3 1.3 0 1 0 -2.6 0M659.60 327.98a1.3 1.3 0 1 0 2.6 0a1.3 1.3 0 1 0 -2.6 0M654.16 331.12a1.3 1.3 0 1 0 2.6 0a1.3 1.3 0 1 0 -2.6 0M648.72 334.26a1.3 1.3 0 1 0 2.6 0a1.3 1.3 0 1 0 -2.6 0M643.28 337.40a1.3 1.3 0 1 0 2.6 0a1.3 1.3 0 1 0 -2.6 0M637.84 340.54a1.3 1.3 0 1 0 2.6 0a1.3 1.3 0 1 0 -2.6 0M632.40 343.68a1.3 1.3 0 1 0 2.6 0a1.3 1.3 0 1 0 -2.6 0M626.96 346.82a1.3 1.3 0 1 0 2.6 0a1.3 1.3 0 1 0 -2.6 0M621.52 349.96a1.3 1.3 0 1 0 2.6 0a1.3 1.3 0 1 0 -2.6 0M724.88 296.58a1.3 1.3 0 1 0 2.6 0a1.3 1.3 0 1 0 -2.6 0M719.44 299.72a1.3 1.3 0 1 0 2.6 0a1.3 1.3 0 1 0 -2.6 0M714.00 302.86a1.3 1.3 0 1 0 2.6 0a1.3 1.3 0 1 0 -2.6 0M708.56 306.00a1.3 1.3 0 1 0 2.6 0a1.3 1.3 0 1 0 -2.6 0M703.12 309.14a1.3 1.3 0 1 0 2.6 0a1.3 1.3 0 1 0 -2.6 0M697.68 312.28a1.3 1.3 0 1 0 2.6 0a1.3 1.3 0 1 0 -2.6 0M692.24 315.42a1.3 1.3 0 1 0 2.6 0a1.3 1.3 0 1 0 -2.6 0M686.80 318.56a1.3 1.3 0 1 0 2.6 0a1.3 1.3 0 1 0 -2.6 0M681.36 321.70a1.3 1.3 0 1 0 2.6 0a1.3 1.3 0 1 0 -2.6 0M675.92 324.84a1.3 1.3 0 1 0 2.6 0a1.3 1.3 0 1 0 -2.6 0M670.48 327.98a1.3 1.3 0 1 0 2.6 0a1.3 1.3 0 1 0 -2.6 0M665.04 331.12a1.3 1.3 0 1 0 2.6 0a1.3 1.3 0 1 0 -2.6 0M659.60 334.26a1.3 1.3 0 1 0 2.6 0a1.3 1.3 0 1 0 -2.6 0M654.16 337.40a1.3 1.3 0 1 0 2.6 0a1.3 1.3 0 1 0 -2.6 0M648.72 340.54a1.3 1.3 0 1 0 2.6 0a1.3 1.3 0 1 0 -2.6 0M643.28 343.68a1.3 1.3 0 1 0 2.6 0a1.3 1.3 0 1 0 -2.6 0M637.84 346.82a1.3 1.3 0 1 0 2.6 0a1.3 1.3 0 1 0 -2.6 0M632.40 349.96a1.3 1.3 0 1 0 2.6 0a1.3 1.3 0 1 0 -2.6 0M626.96 353.10a1.3 1.3 0 1 0 2.6 0a1.3 1.3 0 1 0 -2.6 0M730.32 299.72a1.3 1.3 0 1 0 2.6 0a1.3 1.3 0 1 0 -2.6 0M724.88 302.86a1.3 1.3 0 1 0 2.6 0a1.3 1.3 0 1 0 -2.6 0M719.44 306.00a1.3 1.3 0 1 0 2.6 0a1.3 1.3 0 1 0 -2.6 0M714.00 309.14a1.3 1.3 0 1 0 2.6 0a1.3 1.3 0 1 0 -2.6 0M708.56 312.28a1.3 1.3 0 1 0 2.6 0a1.3 1.3 0 1 0 -2.6 0M703.12 315.42a1.3 1.3 0 1 0 2.6 0a1.3 1.3 0 1 0 -2.6 0M697.68 318.56a1.3 1.3 0 1 0 2.6 0a1.3 1.3 0 1 0 -2.6 0M692.24 321.70a1.3 1.3 0 1 0 2.6 0a1.3 1.3 0 1 0 -2.6 0M686.80 324.84a1.3 1.3 0 1 0 2.6 0a1.3 1.3 0 1 0 -2.6 0M681.36 327.98a1.3 1.3 0 1 0 2.6 0a1.3 1.3 0 1 0 -2.6 0M675.92 331.12a1.3 1.3 0 1 0 2.6 0a1.3 1.3 0 1 0 -2.6 0M670.48 334.26a1.3 1.3 0 1 0 2.6 0a1.3 1.3 0 1 0 -2.6 0M665.04 337.40a1.3 1.3 0 1 0 2.6 0a1.3 1.3 0 1 0 -2.6 0M659.60 340.54a1.3 1.3 0 1 0 2.6 0a1.3 1.3 0 1 0 -2.6 0M654.16 343.68a1.3 1.3 0 1 0 2.6 0a1.3 1.3 0 1 0 -2.6 0M648.72 346.82a1.3 1.3 0 1 0 2.6 0a1.3 1.3 0 1 0 -2.6 0M643.28 349.96a1.3 1.3 0 1 0 2.6 0a1.3 1.3 0 1 0 -2.6 0M637.84 353.10a1.3 1.3 0 1 0 2.6 0a1.3 1.3 0 1 0 -2.6 0M632.40 356.24a1.3 1.3 0 1 0 2.6 0a1.3 1.3 0 1 0 -2.6 0M735.76 302.86a1.3 1.3 0 1 0 2.6 0a1.3 1.3 0 1 0 -2.6 0M730.32 306.00a1.3 1.3 0 1 0 2.6 0a1.3 1.3 0 1 0 -2.6 0M724.88 309.14a1.3 1.3 0 1 0 2.6 0a1.3 1.3 0 1 0 -2.6 0M719.44 312.28a1.3 1.3 0 1 0 2.6 0a1.3 1.3 0 1 0 -2.6 0M714.00 315.42a1.3 1.3 0 1 0 2.6 0a1.3 1.3 0 1 0 -2.6 0M708.56 318.56a1.3 1.3 0 1 0 2.6 0a1.3 1.3 0 1 0 -2.6 0M703.12 321.70a1.3 1.3 0 1 0 2.6 0a1.3 1.3 0 1 0 -2.6 0M697.68 324.84a1.3 1.3 0 1 0 2.6 0a1.3 1.3 0 1 0 -2.6 0M692.24 327.98a1.3 1.3 0 1 0 2.6 0a1.3 1.3 0 1 0 -2.6 0M686.80 331.12a1.3 1.3 0 1 0 2.6 0a1.3 1.3 0 1 0 -2.6 0M681.36 334.26a1.3 1.3 0 1 0 2.6 0a1.3 1.3 0 1 0 -2.6 0M675.92 337.40a1.3 1.3 0 1 0 2.6 0a1.3 1.3 0 1 0 -2.6 0M670.48 340.54a1.3 1.3 0 1 0 2.6 0a1.3 1.3 0 1 0 -2.6 0M665.04 343.68a1.3 1.3 0 1 0 2.6 0a1.3 1.3 0 1 0 -2.6 0M659.60 346.82a1.3 1.3 0 1 0 2.6 0a1.3 1.3 0 1 0 -2.6 0M654.16 349.96a1.3 1.3 0 1 0 2.6 0a1.3 1.3 0 1 0 -2.6 0M648.72 353.10a1.3 1.3 0 1 0 2.6 0a1.3 1.3 0 1 0 -2.6 0M643.28 356.24a1.3 1.3 0 1 0 2.6 0a1.3 1.3 0 1 0 -2.6 0M637.84 359.38a1.3 1.3 0 1 0 2.6 0a1.3 1.3 0 1 0 -2.6 0M741.20 306.00a1.3 1.3 0 1 0 2.6 0a1.3 1.3 0 1 0 -2.6 0M735.76 309.14a1.3 1.3 0 1 0 2.6 0a1.3 1.3 0 1 0 -2.6 0M730.32 312.28a1.3 1.3 0 1 0 2.6 0a1.3 1.3 0 1 0 -2.6 0M724.88 315.42a1.3 1.3 0 1 0 2.6 0a1.3 1.3 0 1 0 -2.6 0M719.44 318.56a1.3 1.3 0 1 0 2.6 0a1.3 1.3 0 1 0 -2.6 0M714.00 321.70a1.3 1.3 0 1 0 2.6 0a1.3 1.3 0 1 0 -2.6 0M708.56 324.84a1.3 1.3 0 1 0 2.6 0a1.3 1.3 0 1 0 -2.6 0M703.12 327.98a1.3 1.3 0 1 0 2.6 0a1.3 1.3 0 1 0 -2.6 0M697.68 331.12a1.3 1.3 0 1 0 2.6 0a1.3 1.3 0 1 0 -2.6 0M692.24 334.26a1.3 1.3 0 1 0 2.6 0a1.3 1.3 0 1 0 -2.6 0M686.80 337.40a1.3 1.3 0 1 0 2.6 0a1.3 1.3 0 1 0 -2.6 0M681.36 340.54a1.3 1.3 0 1 0 2.6 0a1.3 1.3 0 1 0 -2.6 0M675.92 343.68a1.3 1.3 0 1 0 2.6 0a1.3 1.3 0 1 0 -2.6 0M670.48 346.82a1.3 1.3 0 1 0 2.6 0a1.3 1.3 0 1 0 -2.6 0M665.04 349.96a1.3 1.3 0 1 0 2.6 0a1.3 1.3 0 1 0 -2.6 0M659.60 353.10a1.3 1.3 0 1 0 2.6 0a1.3 1.3 0 1 0 -2.6 0M654.16 356.24a1.3 1.3 0 1 0 2.6 0a1.3 1.3 0 1 0 -2.6 0M648.72 359.38a1.3 1.3 0 1 0 2.6 0a1.3 1.3 0 1 0 -2.6 0M643.28 362.52a1.3 1.3 0 1 0 2.6 0a1.3 1.3 0 1 0 -2.6 0M746.64 309.14a1.3 1.3 0 1 0 2.6 0a1.3 1.3 0 1 0 -2.6 0M741.20 312.28a1.3 1.3 0 1 0 2.6 0a1.3 1.3 0 1 0 -2.6 0M735.76 315.42a1.3 1.3 0 1 0 2.6 0a1.3 1.3 0 1 0 -2.6 0M730.32 318.56a1.3 1.3 0 1 0 2.6 0a1.3 1.3 0 1 0 -2.6 0M724.88 321.70a1.3 1.3 0 1 0 2.6 0a1.3 1.3 0 1 0 -2.6 0M719.44 324.84a1.3 1.3 0 1 0 2.6 0a1.3 1.3 0 1 0 -2.6 0M714.00 327.98a1.3 1.3 0 1 0 2.6 0a1.3 1.3 0 1 0 -2.6 0M708.56 331.12a1.3 1.3 0 1 0 2.6 0a1.3 1.3 0 1 0 -2.6 0M703.12 334.26a1.3 1.3 0 1 0 2.6 0a1.3 1.3 0 1 0 -2.6 0M697.68 337.40a1.3 1.3 0 1 0 2.6 0a1.3 1.3 0 1 0 -2.6 0M692.24 340.54a1.3 1.3 0 1 0 2.6 0a1.3 1.3 0 1 0 -2.6 0M686.80 343.68a1.3 1.3 0 1 0 2.6 0a1.3 1.3 0 1 0 -2.6 0M681.36 346.82a1.3 1.3 0 1 0 2.6 0a1.3 1.3 0 1 0 -2.6 0M675.92 349.96a1.3 1.3 0 1 0 2.6 0a1.3 1.3 0 1 0 -2.6 0M670.48 353.10a1.3 1.3 0 1 0 2.6 0a1.3 1.3 0 1 0 -2.6 0M665.04 356.24a1.3 1.3 0 1 0 2.6 0a1.3 1.3 0 1 0 -2.6 0M659.60 359.38a1.3 1.3 0 1 0 2.6 0a1.3 1.3 0 1 0 -2.6 0M654.16 362.52a1.3 1.3 0 1 0 2.6 0a1.3 1.3 0 1 0 -2.6 0M648.72 365.66a1.3 1.3 0 1 0 2.6 0a1.3 1.3 0 1 0 -2.6 0M752.08 312.28a1.3 1.3 0 1 0 2.6 0a1.3 1.3 0 1 0 -2.6 0M746.64 315.42a1.3 1.3 0 1 0 2.6 0a1.3 1.3 0 1 0 -2.6 0M741.20 318.56a1.3 1.3 0 1 0 2.6 0a1.3 1.3 0 1 0 -2.6 0M735.76 321.70a1.3 1.3 0 1 0 2.6 0a1.3 1.3 0 1 0 -2.6 0M730.32 324.84a1.3 1.3 0 1 0 2.6 0a1.3 1.3 0 1 0 -2.6 0M724.88 327.98a1.3 1.3 0 1 0 2.6 0a1.3 1.3 0 1 0 -2.6 0M719.44 331.12a1.3 1.3 0 1 0 2.6 0a1.3 1.3 0 1 0 -2.6 0M714.00 334.26a1.3 1.3 0 1 0 2.6 0a1.3 1.3 0 1 0 -2.6 0M708.56 337.40a1.3 1.3 0 1 0 2.6 0a1.3 1.3 0 1 0 -2.6 0M703.12 340.54a1.3 1.3 0 1 0 2.6 0a1.3 1.3 0 1 0 -2.6 0M697.68 343.68a1.3 1.3 0 1 0 2.6 0a1.3 1.3 0 1 0 -2.6 0M692.24 346.82a1.3 1.3 0 1 0 2.6 0a1.3 1.3 0 1 0 -2.6 0M686.80 349.96a1.3 1.3 0 1 0 2.6 0a1.3 1.3 0 1 0 -2.6 0M681.36 353.10a1.3 1.3 0 1 0 2.6 0a1.3 1.3 0 1 0 -2.6 0M675.92 356.24a1.3 1.3 0 1 0 2.6 0a1.3 1.3 0 1 0 -2.6 0M670.48 359.38a1.3 1.3 0 1 0 2.6 0a1.3 1.3 0 1 0 -2.6 0M665.04 362.52a1.3 1.3 0 1 0 2.6 0a1.3 1.3 0 1 0 -2.6 0M659.60 365.66a1.3 1.3 0 1 0 2.6 0a1.3 1.3 0 1 0 -2.6 0M654.16 368.80a1.3 1.3 0 1 0 2.6 0a1.3 1.3 0 1 0 -2.6 0M757.52 315.42a1.3 1.3 0 1 0 2.6 0a1.3 1.3 0 1 0 -2.6 0M752.08 318.56a1.3 1.3 0 1 0 2.6 0a1.3 1.3 0 1 0 -2.6 0M746.64 321.70a1.3 1.3 0 1 0 2.6 0a1.3 1.3 0 1 0 -2.6 0M741.20 324.84a1.3 1.3 0 1 0 2.6 0a1.3 1.3 0 1 0 -2.6 0M735.76 327.98a1.3 1.3 0 1 0 2.6 0a1.3 1.3 0 1 0 -2.6 0M730.32 331.12a1.3 1.3 0 1 0 2.6 0a1.3 1.3 0 1 0 -2.6 0M724.88 334.26a1.3 1.3 0 1 0 2.6 0a1.3 1.3 0 1 0 -2.6 0M719.44 337.40a1.3 1.3 0 1 0 2.6 0a1.3 1.3 0 1 0 -2.6 0M714.00 340.54a1.3 1.3 0 1 0 2.6 0a1.3 1.3 0 1 0 -2.6 0M708.56 343.68a1.3 1.3 0 1 0 2.6 0a1.3 1.3 0 1 0 -2.6 0M703.12 346.82a1.3 1.3 0 1 0 2.6 0a1.3 1.3 0 1 0 -2.6 0M697.68 349.96a1.3 1.3 0 1 0 2.6 0a1.3 1.3 0 1 0 -2.6 0M692.24 353.10a1.3 1.3 0 1 0 2.6 0a1.3 1.3 0 1 0 -2.6 0M686.80 356.24a1.3 1.3 0 1 0 2.6 0a1.3 1.3 0 1 0 -2.6 0M681.36 359.38a1.3 1.3 0 1 0 2.6 0a1.3 1.3 0 1 0 -2.6 0M675.92 362.52a1.3 1.3 0 1 0 2.6 0a1.3 1.3 0 1 0 -2.6 0M670.48 365.66a1.3 1.3 0 1 0 2.6 0a1.3 1.3 0 1 0 -2.6 0M665.04 368.80a1.3 1.3 0 1 0 2.6 0a1.3 1.3 0 1 0 -2.6 0M659.60 371.94a1.3 1.3 0 1 0 2.6 0a1.3 1.3 0 1 0 -2.6 0M762.96 318.56a1.3 1.3 0 1 0 2.6 0a1.3 1.3 0 1 0 -2.6 0M757.52 321.70a1.3 1.3 0 1 0 2.6 0a1.3 1.3 0 1 0 -2.6 0M752.08 324.84a1.3 1.3 0 1 0 2.6 0a1.3 1.3 0 1 0 -2.6 0M746.64 327.98a1.3 1.3 0 1 0 2.6 0a1.3 1.3 0 1 0 -2.6 0M741.20 331.12a1.3 1.3 0 1 0 2.6 0a1.3 1.3 0 1 0 -2.6 0M735.76 334.26a1.3 1.3 0 1 0 2.6 0a1.3 1.3 0 1 0 -2.6 0M730.32 337.40a1.3 1.3 0 1 0 2.6 0a1.3 1.3 0 1 0 -2.6 0M724.88 340.54a1.3 1.3 0 1 0 2.6 0a1.3 1.3 0 1 0 -2.6 0M719.44 343.68a1.3 1.3 0 1 0 2.6 0a1.3 1.3 0 1 0 -2.6 0M714.00 346.82a1.3 1.3 0 1 0 2.6 0a1.3 1.3 0 1 0 -2.6 0M708.56 349.96a1.3 1.3 0 1 0 2.6 0a1.3 1.3 0 1 0 -2.6 0M703.12 353.10a1.3 1.3 0 1 0 2.6 0a1.3 1.3 0 1 0 -2.6 0M697.68 356.24a1.3 1.3 0 1 0 2.6 0a1.3 1.3 0 1 0 -2.6 0M692.24 359.38a1.3 1.3 0 1 0 2.6 0a1.3 1.3 0 1 0 -2.6 0M686.80 362.52a1.3 1.3 0 1 0 2.6 0a1.3 1.3 0 1 0 -2.6 0M681.36 365.66a1.3 1.3 0 1 0 2.6 0a1.3 1.3 0 1 0 -2.6 0M675.92 368.80a1.3 1.3 0 1 0 2.6 0a1.3 1.3 0 1 0 -2.6 0M670.48 371.94a1.3 1.3 0 1 0 2.6 0a1.3 1.3 0 1 0 -2.6 0M665.04 375.08a1.3 1.3 0 1 0 2.6 0a1.3 1.3 0 1 0 -2.6 0M768.40 321.70a1.3 1.3 0 1 0 2.6 0a1.3 1.3 0 1 0 -2.6 0M762.96 324.84a1.3 1.3 0 1 0 2.6 0a1.3 1.3 0 1 0 -2.6 0M757.52 327.98a1.3 1.3 0 1 0 2.6 0a1.3 1.3 0 1 0 -2.6 0M752.08 331.12a1.3 1.3 0 1 0 2.6 0a1.3 1.3 0 1 0 -2.6 0M746.64 334.26a1.3 1.3 0 1 0 2.6 0a1.3 1.3 0 1 0 -2.6 0M741.20 337.40a1.3 1.3 0 1 0 2.6 0a1.3 1.3 0 1 0 -2.6 0M735.76 340.54a1.3 1.3 0 1 0 2.6 0a1.3 1.3 0 1 0 -2.6 0M730.32 343.68a1.3 1.3 0 1 0 2.6 0a1.3 1.3 0 1 0 -2.6 0M724.88 346.82a1.3 1.3 0 1 0 2.6 0a1.3 1.3 0 1 0 -2.6 0M719.44 349.96a1.3 1.3 0 1 0 2.6 0a1.3 1.3 0 1 0 -2.6 0M714.00 353.10a1.3 1.3 0 1 0 2.6 0a1.3 1.3 0 1 0 -2.6 0M708.56 356.24a1.3 1.3 0 1 0 2.6 0a1.3 1.3 0 1 0 -2.6 0M703.12 359.38a1.3 1.3 0 1 0 2.6 0a1.3 1.3 0 1 0 -2.6 0M697.68 362.52a1.3 1.3 0 1 0 2.6 0a1.3 1.3 0 1 0 -2.6 0M692.24 365.66a1.3 1.3 0 1 0 2.6 0a1.3 1.3 0 1 0 -2.6 0M686.80 368.80a1.3 1.3 0 1 0 2.6 0a1.3 1.3 0 1 0 -2.6 0M681.36 371.94a1.3 1.3 0 1 0 2.6 0a1.3 1.3 0 1 0 -2.6 0M675.92 375.08a1.3 1.3 0 1 0 2.6 0a1.3 1.3 0 1 0 -2.6 0M670.48 378.22a1.3 1.3 0 1 0 2.6 0a1.3 1.3 0 1 0 -2.6 0M773.84 324.84a1.3 1.3 0 1 0 2.6 0a1.3 1.3 0 1 0 -2.6 0M768.40 327.98a1.3 1.3 0 1 0 2.6 0a1.3 1.3 0 1 0 -2.6 0M762.96 331.12a1.3 1.3 0 1 0 2.6 0a1.3 1.3 0 1 0 -2.6 0M757.52 334.26a1.3 1.3 0 1 0 2.6 0a1.3 1.3 0 1 0 -2.6 0M752.08 337.40a1.3 1.3 0 1 0 2.6 0a1.3 1.3 0 1 0 -2.6 0M746.64 340.54a1.3 1.3 0 1 0 2.6 0a1.3 1.3 0 1 0 -2.6 0M741.20 343.68a1.3 1.3 0 1 0 2.6 0a1.3 1.3 0 1 0 -2.6 0M735.76 346.82a1.3 1.3 0 1 0 2.6 0a1.3 1.3 0 1 0 -2.6 0M730.32 349.96a1.3 1.3 0 1 0 2.6 0a1.3 1.3 0 1 0 -2.6 0M724.88 353.10a1.3 1.3 0 1 0 2.6 0a1.3 1.3 0 1 0 -2.6 0M719.44 356.24a1.3 1.3 0 1 0 2.6 0a1.3 1.3 0 1 0 -2.6 0M714.00 359.38a1.3 1.3 0 1 0 2.6 0a1.3 1.3 0 1 0 -2.6 0M708.56 362.52a1.3 1.3 0 1 0 2.6 0a1.3 1.3 0 1 0 -2.6 0M703.12 365.66a1.3 1.3 0 1 0 2.6 0a1.3 1.3 0 1 0 -2.6 0M697.68 368.80a1.3 1.3 0 1 0 2.6 0a1.3 1.3 0 1 0 -2.6 0M692.24 371.94a1.3 1.3 0 1 0 2.6 0a1.3 1.3 0 1 0 -2.6 0M686.80 375.08a1.3 1.3 0 1 0 2.6 0a1.3 1.3 0 1 0 -2.6 0M681.36 378.22a1.3 1.3 0 1 0 2.6 0a1.3 1.3 0 1 0 -2.6 0M675.92 381.36a1.3 1.3 0 1 0 2.6 0a1.3 1.3 0 1 0 -2.6 0M779.28 327.98a1.3 1.3 0 1 0 2.6 0a1.3 1.3 0 1 0 -2.6 0M773.84 331.12a1.3 1.3 0 1 0 2.6 0a1.3 1.3 0 1 0 -2.6 0M768.40 334.26a1.3 1.3 0 1 0 2.6 0a1.3 1.3 0 1 0 -2.6 0M762.96 337.40a1.3 1.3 0 1 0 2.6 0a1.3 1.3 0 1 0 -2.6 0M757.52 340.54a1.3 1.3 0 1 0 2.6 0a1.3 1.3 0 1 0 -2.6 0M752.08 343.68a1.3 1.3 0 1 0 2.6 0a1.3 1.3 0 1 0 -2.6 0M746.64 346.82a1.3 1.3 0 1 0 2.6 0a1.3 1.3 0 1 0 -2.6 0M741.20 349.96a1.3 1.3 0 1 0 2.6 0a1.3 1.3 0 1 0 -2.6 0M735.76 353.10a1.3 1.3 0 1 0 2.6 0a1.3 1.3 0 1 0 -2.6 0M730.32 356.24a1.3 1.3 0 1 0 2.6 0a1.3 1.3 0 1 0 -2.6 0M724.88 359.38a1.3 1.3 0 1 0 2.6 0a1.3 1.3 0 1 0 -2.6 0M719.44 362.52a1.3 1.3 0 1 0 2.6 0a1.3 1.3 0 1 0 -2.6 0M714.00 365.66a1.3 1.3 0 1 0 2.6 0a1.3 1.3 0 1 0 -2.6 0M708.56 368.80a1.3 1.3 0 1 0 2.6 0a1.3 1.3 0 1 0 -2.6 0M703.12 371.94a1.3 1.3 0 1 0 2.6 0a1.3 1.3 0 1 0 -2.6 0M697.68 375.08a1.3 1.3 0 1 0 2.6 0a1.3 1.3 0 1 0 -2.6 0M692.24 378.22a1.3 1.3 0 1 0 2.6 0a1.3 1.3 0 1 0 -2.6 0M686.80 381.36a1.3 1.3 0 1 0 2.6 0a1.3 1.3 0 1 0 -2.6 0M681.36 384.50a1.3 1.3 0 1 0 2.6 0a1.3 1.3 0 1 0 -2.6 0M784.72 331.12a1.3 1.3 0 1 0 2.6 0a1.3 1.3 0 1 0 -2.6 0M779.28 334.26a1.3 1.3 0 1 0 2.6 0a1.3 1.3 0 1 0 -2.6 0M773.84 337.40a1.3 1.3 0 1 0 2.6 0a1.3 1.3 0 1 0 -2.6 0M768.40 340.54a1.3 1.3 0 1 0 2.6 0a1.3 1.3 0 1 0 -2.6 0M762.96 343.68a1.3 1.3 0 1 0 2.6 0a1.3 1.3 0 1 0 -2.6 0M757.52 346.82a1.3 1.3 0 1 0 2.6 0a1.3 1.3 0 1 0 -2.6 0M752.08 349.96a1.3 1.3 0 1 0 2.6 0a1.3 1.3 0 1 0 -2.6 0M746.64 353.10a1.3 1.3 0 1 0 2.6 0a1.3 1.3 0 1 0 -2.6 0M741.20 356.24a1.3 1.3 0 1 0 2.6 0a1.3 1.3 0 1 0 -2.6 0M735.76 359.38a1.3 1.3 0 1 0 2.6 0a1.3 1.3 0 1 0 -2.6 0M730.32 362.52a1.3 1.3 0 1 0 2.6 0a1.3 1.3 0 1 0 -2.6 0M724.88 365.66a1.3 1.3 0 1 0 2.6 0a1.3 1.3 0 1 0 -2.6 0M719.44 368.80a1.3 1.3 0 1 0 2.6 0a1.3 1.3 0 1 0 -2.6 0M714.00 371.94a1.3 1.3 0 1 0 2.6 0a1.3 1.3 0 1 0 -2.6 0M708.56 375.08a1.3 1.3 0 1 0 2.6 0a1.3 1.3 0 1 0 -2.6 0M703.12 378.22a1.3 1.3 0 1 0 2.6 0a1.3 1.3 0 1 0 -2.6 0M697.68 381.36a1.3 1.3 0 1 0 2.6 0a1.3 1.3 0 1 0 -2.6 0M692.24 384.50a1.3 1.3 0 1 0 2.6 0a1.3 1.3 0 1 0 -2.6 0M686.80 387.64a1.3 1.3 0 1 0 2.6 0a1.3 1.3 0 1 0 -2.6 0M790.16 334.26a1.3 1.3 0 1 0 2.6 0a1.3 1.3 0 1 0 -2.6 0M784.72 337.40a1.3 1.3 0 1 0 2.6 0a1.3 1.3 0 1 0 -2.6 0M779.28 340.54a1.3 1.3 0 1 0 2.6 0a1.3 1.3 0 1 0 -2.6 0M773.84 343.68a1.3 1.3 0 1 0 2.6 0a1.3 1.3 0 1 0 -2.6 0M768.40 346.82a1.3 1.3 0 1 0 2.6 0a1.3 1.3 0 1 0 -2.6 0M762.96 349.96a1.3 1.3 0 1 0 2.6 0a1.3 1.3 0 1 0 -2.6 0M757.52 353.10a1.3 1.3 0 1 0 2.6 0a1.3 1.3 0 1 0 -2.6 0M752.08 356.24a1.3 1.3 0 1 0 2.6 0a1.3 1.3 0 1 0 -2.6 0M746.64 359.38a1.3 1.3 0 1 0 2.6 0a1.3 1.3 0 1 0 -2.6 0M741.20 362.52a1.3 1.3 0 1 0 2.6 0a1.3 1.3 0 1 0 -2.6 0M735.76 365.66a1.3 1.3 0 1 0 2.6 0a1.3 1.3 0 1 0 -2.6 0M730.32 368.80a1.3 1.3 0 1 0 2.6 0a1.3 1.3 0 1 0 -2.6 0M724.88 371.94a1.3 1.3 0 1 0 2.6 0a1.3 1.3 0 1 0 -2.6 0M719.44 375.08a1.3 1.3 0 1 0 2.6 0a1.3 1.3 0 1 0 -2.6 0M714.00 378.22a1.3 1.3 0 1 0 2.6 0a1.3 1.3 0 1 0 -2.6 0M708.56 381.36a1.3 1.3 0 1 0 2.6 0a1.3 1.3 0 1 0 -2.6 0M703.12 384.50a1.3 1.3 0 1 0 2.6 0a1.3 1.3 0 1 0 -2.6 0M697.68 387.64a1.3 1.3 0 1 0 2.6 0a1.3 1.3 0 1 0 -2.6 0M692.24 390.78a1.3 1.3 0 1 0 2.6 0a1.3 1.3 0 1 0 -2.6 0M795.60 337.40a1.3 1.3 0 1 0 2.6 0a1.3 1.3 0 1 0 -2.6 0M790.16 340.54a1.3 1.3 0 1 0 2.6 0a1.3 1.3 0 1 0 -2.6 0M784.72 343.68a1.3 1.3 0 1 0 2.6 0a1.3 1.3 0 1 0 -2.6 0M779.28 346.82a1.3 1.3 0 1 0 2.6 0a1.3 1.3 0 1 0 -2.6 0M773.84 349.96a1.3 1.3 0 1 0 2.6 0a1.3 1.3 0 1 0 -2.6 0M768.40 353.10a1.3 1.3 0 1 0 2.6 0a1.3 1.3 0 1 0 -2.6 0M762.96 356.24a1.3 1.3 0 1 0 2.6 0a1.3 1.3 0 1 0 -2.6 0M757.52 359.38a1.3 1.3 0 1 0 2.6 0a1.3 1.3 0 1 0 -2.6 0M752.08 362.52a1.3 1.3 0 1 0 2.6 0a1.3 1.3 0 1 0 -2.6 0M746.64 365.66a1.3 1.3 0 1 0 2.6 0a1.3 1.3 0 1 0 -2.6 0M741.20 368.80a1.3 1.3 0 1 0 2.6 0a1.3 1.3 0 1 0 -2.6 0M735.76 371.94a1.3 1.3 0 1 0 2.6 0a1.3 1.3 0 1 0 -2.6 0M730.32 375.08a1.3 1.3 0 1 0 2.6 0a1.3 1.3 0 1 0 -2.6 0M724.88 378.22a1.3 1.3 0 1 0 2.6 0a1.3 1.3 0 1 0 -2.6 0M719.44 381.36a1.3 1.3 0 1 0 2.6 0a1.3 1.3 0 1 0 -2.6 0M714.00 384.50a1.3 1.3 0 1 0 2.6 0a1.3 1.3 0 1 0 -2.6 0M708.56 387.64a1.3 1.3 0 1 0 2.6 0a1.3 1.3 0 1 0 -2.6 0M703.12 390.78a1.3 1.3 0 1 0 2.6 0a1.3 1.3 0 1 0 -2.6 0M697.68 393.92a1.3 1.3 0 1 0 2.6 0a1.3 1.3 0 1 0 -2.6 0M801.04 340.54a1.3 1.3 0 1 0 2.6 0a1.3 1.3 0 1 0 -2.6 0M795.60 343.68a1.3 1.3 0 1 0 2.6 0a1.3 1.3 0 1 0 -2.6 0M790.16 346.82a1.3 1.3 0 1 0 2.6 0a1.3 1.3 0 1 0 -2.6 0M784.72 349.96a1.3 1.3 0 1 0 2.6 0a1.3 1.3 0 1 0 -2.6 0M779.28 353.10a1.3 1.3 0 1 0 2.6 0a1.3 1.3 0 1 0 -2.6 0M773.84 356.24a1.3 1.3 0 1 0 2.6 0a1.3 1.3 0 1 0 -2.6 0M768.40 359.38a1.3 1.3 0 1 0 2.6 0a1.3 1.3 0 1 0 -2.6 0M762.96 362.52a1.3 1.3 0 1 0 2.6 0a1.3 1.3 0 1 0 -2.6 0M757.52 365.66a1.3 1.3 0 1 0 2.6 0a1.3 1.3 0 1 0 -2.6 0M752.08 368.80a1.3 1.3 0 1 0 2.6 0a1.3 1.3 0 1 0 -2.6 0M746.64 371.94a1.3 1.3 0 1 0 2.6 0a1.3 1.3 0 1 0 -2.6 0M741.20 375.08a1.3 1.3 0 1 0 2.6 0a1.3 1.3 0 1 0 -2.6 0M735.76 378.22a1.3 1.3 0 1 0 2.6 0a1.3 1.3 0 1 0 -2.6 0M730.32 381.36a1.3 1.3 0 1 0 2.6 0a1.3 1.3 0 1 0 -2.6 0M724.88 384.50a1.3 1.3 0 1 0 2.6 0a1.3 1.3 0 1 0 -2.6 0M719.44 387.64a1.3 1.3 0 1 0 2.6 0a1.3 1.3 0 1 0 -2.6 0M714.00 390.78a1.3 1.3 0 1 0 2.6 0a1.3 1.3 0 1 0 -2.6 0M708.56 393.92a1.3 1.3 0 1 0 2.6 0a1.3 1.3 0 1 0 -2.6 0M703.12 397.06a1.3 1.3 0 1 0 2.6 0a1.3 1.3 0 1 0 -2.6 0M806.48 343.68a1.3 1.3 0 1 0 2.6 0a1.3 1.3 0 1 0 -2.6 0M801.04 346.82a1.3 1.3 0 1 0 2.6 0a1.3 1.3 0 1 0 -2.6 0M795.60 349.96a1.3 1.3 0 1 0 2.6 0a1.3 1.3 0 1 0 -2.6 0M790.16 353.10a1.3 1.3 0 1 0 2.6 0a1.3 1.3 0 1 0 -2.6 0M784.72 356.24a1.3 1.3 0 1 0 2.6 0a1.3 1.3 0 1 0 -2.6 0M779.28 359.38a1.3 1.3 0 1 0 2.6 0a1.3 1.3 0 1 0 -2.6 0M773.84 362.52a1.3 1.3 0 1 0 2.6 0a1.3 1.3 0 1 0 -2.6 0M768.40 365.66a1.3 1.3 0 1 0 2.6 0a1.3 1.3 0 1 0 -2.6 0M762.96 368.80a1.3 1.3 0 1 0 2.6 0a1.3 1.3 0 1 0 -2.6 0M757.52 371.94a1.3 1.3 0 1 0 2.6 0a1.3 1.3 0 1 0 -2.6 0M752.08 375.08a1.3 1.3 0 1 0 2.6 0a1.3 1.3 0 1 0 -2.6 0M746.64 378.22a1.3 1.3 0 1 0 2.6 0a1.3 1.3 0 1 0 -2.6 0M741.20 381.36a1.3 1.3 0 1 0 2.6 0a1.3 1.3 0 1 0 -2.6 0M735.76 384.50a1.3 1.3 0 1 0 2.6 0a1.3 1.3 0 1 0 -2.6 0M730.32 387.64a1.3 1.3 0 1 0 2.6 0a1.3 1.3 0 1 0 -2.6 0M724.88 390.78a1.3 1.3 0 1 0 2.6 0a1.3 1.3 0 1 0 -2.6 0M719.44 393.92a1.3 1.3 0 1 0 2.6 0a1.3 1.3 0 1 0 -2.6 0M714.00 397.06a1.3 1.3 0 1 0 2.6 0a1.3 1.3 0 1 0 -2.6 0M708.56 400.20a1.3 1.3 0 1 0 2.6 0a1.3 1.3 0 1 0 -2.6 0M811.92 346.82a1.3 1.3 0 1 0 2.6 0a1.3 1.3 0 1 0 -2.6 0M806.48 349.96a1.3 1.3 0 1 0 2.6 0a1.3 1.3 0 1 0 -2.6 0M801.04 353.10a1.3 1.3 0 1 0 2.6 0a1.3 1.3 0 1 0 -2.6 0M795.60 356.24a1.3 1.3 0 1 0 2.6 0a1.3 1.3 0 1 0 -2.6 0M790.16 359.38a1.3 1.3 0 1 0 2.6 0a1.3 1.3 0 1 0 -2.6 0M784.72 362.52a1.3 1.3 0 1 0 2.6 0a1.3 1.3 0 1 0 -2.6 0M779.28 365.66a1.3 1.3 0 1 0 2.6 0a1.3 1.3 0 1 0 -2.6 0M773.84 368.80a1.3 1.3 0 1 0 2.6 0a1.3 1.3 0 1 0 -2.6 0M768.40 371.94a1.3 1.3 0 1 0 2.6 0a1.3 1.3 0 1 0 -2.6 0M762.96 375.08a1.3 1.3 0 1 0 2.6 0a1.3 1.3 0 1 0 -2.6 0M757.52 378.22a1.3 1.3 0 1 0 2.6 0a1.3 1.3 0 1 0 -2.6 0M752.08 381.36a1.3 1.3 0 1 0 2.6 0a1.3 1.3 0 1 0 -2.6 0M746.64 384.50a1.3 1.3 0 1 0 2.6 0a1.3 1.3 0 1 0 -2.6 0M741.20 387.64a1.3 1.3 0 1 0 2.6 0a1.3 1.3 0 1 0 -2.6 0M735.76 390.78a1.3 1.3 0 1 0 2.6 0a1.3 1.3 0 1 0 -2.6 0M730.32 393.92a1.3 1.3 0 1 0 2.6 0a1.3 1.3 0 1 0 -2.6 0M724.88 397.06a1.3 1.3 0 1 0 2.6 0a1.3 1.3 0 1 0 -2.6 0M719.44 400.20a1.3 1.3 0 1 0 2.6 0a1.3 1.3 0 1 0 -2.6 0M714.00 403.34a1.3 1.3 0 1 0 2.6 0a1.3 1.3 0 1 0 -2.6 0" fill="#07640f"/>
<path d="M715.3 441.0L715.3 403.3L764.3 431.6L764.3 469.3" fill="none" stroke="#b84a44" stroke-width="0.8"/>
<path d="M715.3 441.0L764.3 469.3" stroke="#e0831c" stroke-width="1.5"/>
<path d="M745.8 436.5L754.5 441.5L754.5 462.1L745.8 457.1zM745.8 436.5L754.5 462.1M754.5 441.5L745.8 457.1" fill="none" stroke="#b84a44" stroke-width="0.6"/>
<path d="M739.8 428.7v10.6" stroke="#b84a44" stroke-width="0.8"/>
<path d="M711.3 445.5h8M712.3 447.4l1.2-1.8M714.3 447.4l1.2-1.8M716.3 447.4l1.2-1.8M718.3 447.4l1.2-1.8" stroke="#e0831c" stroke-width="0.9"/>
<path d="M813.2 365.8L813.2 346.8L862.2 375.1L862.2 412.8" fill="none" stroke="#b84a44" stroke-width="0.8"/>
<path d="M829.5 393.9L862.2 412.8" stroke="#e0831c" stroke-width="1.5"/>
<path d="M843.1 379.7L851.8 384.7L851.8 400.3L843.1 395.3zM843.1 379.7L851.8 400.3M851.8 384.7L843.1 395.3" fill="none" stroke="#b84a44" stroke-width="0.6" stroke-dasharray="1.2 0.5"/>
<path d="M837.7 374.0v12" stroke="#b84a44" stroke-width="0.8"/>
<path d="M862.2 375.1L813.2 403.3L813.2 441.0" fill="none" stroke="#bdbdbd" stroke-width="0.7"/>
<path d="M813.2 441.0L862.2 412.8" stroke="#e0831c" stroke-width="1.5"/>
<path d="M820.3 407.3L825.7 404.1L825.7 417.1L820.3 420.3zM820.3 407.3L825.7 417.1M825.7 404.1L820.3 420.3" fill="none" stroke="#9a9a9a" stroke-width="0.5"/>
<path d="M833.3 399.7L838.8 396.6L838.8 409.6L833.3 412.7zM833.3 399.7L838.8 409.6M838.8 396.6L833.3 412.7" fill="none" stroke="#9a9a9a" stroke-width="0.5"/>
<path d="M847.5 390.6L852.9 387.4L852.9 400.4L847.5 403.6zM847.5 390.6L852.9 400.4M852.9 387.4L847.5 403.6" fill="none" stroke="#9a9a9a" stroke-width="0.5"/>
<path d="M830.1 406.2l11-5M836.1 395.2v14" stroke="#8a8a8a" stroke-width="0.6"/>
<path d="M677.3 292.0a2.4 2.4 0 1 0 4.8 0a2.4 2.4 0 1 0 -4.8 0M679.7 289.9v4.2M634.2 316.8a2.4 2.4 0 1 0 4.8 0a2.4 2.4 0 1 0 -4.8 0M636.6 314.7v4.2M693.6 301.4a2.4 2.4 0 1 0 4.8 0a2.4 2.4 0 1 0 -4.8 0M696.0 299.3v4.2M650.6 326.3a2.4 2.4 0 1 0 4.8 0a2.4 2.4 0 1 0 -4.8 0M653.0 324.2v4.2M775.2 292.0a2.4 2.4 0 1 0 4.8 0a2.4 2.4 0 1 0 -4.8 0M777.6 289.9v4.2M791.6 301.4a2.4 2.4 0 1 0 4.8 0a2.4 2.4 0 1 0 -4.8 0M794.0 299.3v4.2M807.9 310.8a2.4 2.4 0 1 0 4.8 0a2.4 2.4 0 1 0 -4.8 0M810.3 308.7v4.2M824.2 320.2a2.4 2.4 0 1 0 4.8 0a2.4 2.4 0 1 0 -4.8 0M826.6 318.1v4.2M840.5 329.7a2.4 2.4 0 1 0 4.8 0a2.4 2.4 0 1 0 -4.8 0M842.9 327.6v4.2M856.8 339.1a2.4 2.4 0 1 0 4.8 0a2.4 2.4 0 1 0 -4.8 0M859.2 337.0v4.2M617.9 307.4a2.4 2.4 0 1 0 4.8 0a2.4 2.4 0 1 0 -4.8 0M620.3 305.3v4.2M661.0 282.6a2.4 2.4 0 1 0 4.8 0a2.4 2.4 0 1 0 -4.8 0M663.4 280.5v4.2M666.9 279.2a2.4 2.4 0 1 0 4.8 0a2.4 2.4 0 1 0 -4.8 0M669.3 277.1v4.2M710.0 254.3a2.4 2.4 0 1 0 4.8 0a2.4 2.4 0 1 0 -4.8 0M712.4 252.2v4.2M615.0 341.4a2.4 2.4 0 1 0 4.8 0a2.4 2.4 0 1 0 -4.8 0M617.4 339.3v4.2M663.9 313.2a2.4 2.4 0 1 0 4.8 0a2.4 2.4 0 1 0 -4.8 0M666.3 311.1v4.2M761.9 313.2a2.4 2.4 0 1 0 4.8 0a2.4 2.4 0 1 0 -4.8 0M764.3 311.1v4.2M810.8 341.4a2.4 2.4 0 1 0 4.8 0a2.4 2.4 0 1 0 -4.8 0M813.2 339.3v4.2M712.9 284.9a2.4 2.4 0 1 0 4.8 0a2.4 2.4 0 1 0 -4.8 0M715.3 282.8v4.2M813.8 363.6a2.4 2.4 0 1 0 4.8 0a2.4 2.4 0 1 0 -4.8 0M816.2 361.5v4.2M856.8 339.1a2.4 2.4 0 1 0 4.8 0a2.4 2.4 0 1 0 -4.8 0M859.2 337.0v4.2M814.2 366.0a2.4 2.4 0 1 0 4.8 0a2.4 2.4 0 1 0 -4.8 0M816.6 363.9v4.2M856.4 374.4a2.4 2.4 0 1 0 4.8 0a2.4 2.4 0 1 0 -4.8 0M858.8 372.3v4.2M857.8 340.1a2.4 2.4 0 1 0 4.8 0a2.4 2.4 0 1 0 -4.8 0M860.2 338.0v4.2M812.8 400.6a2.4 2.4 0 1 0 4.8 0a2.4 2.4 0 1 0 -4.8 0M815.2 398.5v4.2M859.8 371.1a2.4 2.4 0 1 0 4.8 0a2.4 2.4 0 1 0 -4.8 0M862.2 369.0v4.2M724.7 320.5a2.4 2.4 0 1 0 4.8 0a2.4 2.4 0 1 0 -4.8 0M727.1 318.4v4.2M734.6 315.5a2.4 2.4 0 1 0 4.8 0a2.4 2.4 0 1 0 -4.8 0M737.0 313.4v4.2M740.4 330.3a2.4 2.4 0 1 0 4.8 0a2.4 2.4 0 1 0 -4.8 0M742.8 328.2v4.2M750.3 324.6a2.4 2.4 0 1 0 4.8 0a2.4 2.4 0 1 0 -4.8 0M752.7 322.5v4.2M783.2 343.5a2.4 2.4 0 1 0 4.8 0a2.4 2.4 0 1 0 -4.8 0M785.6 341.4v4.2M798.9 352.6a2.4 2.4 0 1 0 4.8 0a2.4 2.4 0 1 0 -4.8 0M801.3 350.5v4.2M687.4 240.7a2.4 2.4 0 1 0 4.8 0a2.4 2.4 0 1 0 -4.8 0M689.8 238.6v4.2M702.2 215.2a2.4 2.4 0 1 0 4.8 0a2.4 2.4 0 1 0 -4.8 0M704.6 213.1v4.2M738.5 240.7a2.4 2.4 0 1 0 4.8 0a2.4 2.4 0 1 0 -4.8 0M740.9 238.6v4.2M723.6 215.2a2.4 2.4 0 1 0 4.8 0a2.4 2.4 0 1 0 -4.8 0M726.0 213.1v4.2M688.2 241.3a2.4 2.4 0 1 0 4.8 0a2.4 2.4 0 1 0 -4.8 0M690.6 239.2v4.2M710.4 219.9a2.4 2.4 0 1 0 4.8 0a2.4 2.4 0 1 0 -4.8 0M712.8 217.8v4.2M737.7 241.3a2.4 2.4 0 1 0 4.8 0a2.4 2.4 0 1 0 -4.8 0M740.1 239.2v4.2M715.4 219.9a2.4 2.4 0 1 0 4.8 0a2.4 2.4 0 1 0 -4.8 0M717.8 217.8v4.2M704.5 215.6a2.4 2.4 0 1 0 4.8 0a2.4 2.4 0 1 0 -4.8 0M706.9 213.5v4.2M712.3 255.9a2.4 2.4 0 1 0 4.8 0a2.4 2.4 0 1 0 -4.8 0M714.7 253.8v4.2M721.3 215.6a2.4 2.4 0 1 0 4.8 0a2.4 2.4 0 1 0 -4.8 0M723.7 213.5v4.2M713.5 255.9a2.4 2.4 0 1 0 4.8 0a2.4 2.4 0 1 0 -4.8 0M715.9 253.8v4.2M666.9 279.2a2.4 2.4 0 1 0 4.8 0a2.4 2.4 0 1 0 -4.8 0M669.3 277.1v4.2M758.9 279.2a2.4 2.4 0 1 0 4.8 0a2.4 2.4 0 1 0 -4.8 0M761.3 277.1v4.2M687.0 246.7a2.4 2.4 0 1 0 4.8 0a2.4 2.4 0 1 0 -4.8 0M689.4 244.6v4.2M738.9 246.7a2.4 2.4 0 1 0 4.8 0a2.4 2.4 0 1 0 -4.8 0M741.3 244.6v4.2M667.0 279.5a2.4 2.4 0 1 0 4.8 0a2.4 2.4 0 1 0 -4.8 0M669.4 277.4v4.2M758.8 279.5a2.4 2.4 0 1 0 4.8 0a2.4 2.4 0 1 0 -4.8 0M761.2 277.4v4.2M712.9 285.0a2.4 2.4 0 1 0 4.8 0a2.4 2.4 0 1 0 -4.8 0M715.3 282.9v4.2M709.7 261.5a2.4 2.4 0 1 0 4.8 0a2.4 2.4 0 1 0 -4.8 0M712.1 259.4v4.2M716.1 261.5a2.4 2.4 0 1 0 4.8 0a2.4 2.4 0 1 0 -4.8 0M718.5 259.4v4.2M667.3 444.1a2.4 2.4 0 1 0 4.8 0a2.4 2.4 0 1 0 -4.8 0M669.7 442.0v4.2M708.5 406.6a2.4 2.4 0 1 0 4.8 0a2.4 2.4 0 1 0 -4.8 0M710.9 404.5v4.2" fill="#fff" fill-opacity="0.55" stroke="#363636" stroke-width="0.65"/><path d="M727.3 421.1a2.7 2.7 0 1 0 5.4 0a2.7 2.7 0 1 0 -5.4 0M730.0 418.8v4.6M750.1 434.3a2.7 2.7 0 1 0 5.4 0a2.7 2.7 0 1 0 -5.4 0M752.8 432.0v4.6M711.5 414.8a2.7 2.7 0 1 0 5.4 0a2.7 2.7 0 1 0 -5.4 0M714.2 412.5v4.6M708.5 416.6a2.7 2.7 0 1 0 5.4 0a2.7 2.7 0 1 0 -5.4 0M711.2 414.3v4.6M705.8 418.1a2.7 2.7 0 1 0 5.4 0a2.7 2.7 0 1 0 -5.4 0M708.5 415.8v4.6M736.0 429.0a2.7 2.7 0 1 0 5.4 0a2.7 2.7 0 1 0 -5.4 0M738.7 426.7v4.6M733.0 430.7a2.7 2.7 0 1 0 5.4 0a2.7 2.7 0 1 0 -5.4 0M735.7 428.4v4.6M730.3 432.3a2.7 2.7 0 1 0 5.4 0a2.7 2.7 0 1 0 -5.4 0M733.0 430.0v4.6M760.5 443.1a2.7 2.7 0 1 0 5.4 0a2.7 2.7 0 1 0 -5.4 0M763.2 440.8v4.6M757.5 444.8a2.7 2.7 0 1 0 5.4 0a2.7 2.7 0 1 0 -5.4 0M760.2 442.5v4.6M754.8 446.4a2.7 2.7 0 1 0 5.4 0a2.7 2.7 0 1 0 -5.4 0M757.5 444.1v4.6M717.5 426.8a2.7 2.7 0 1 0 5.4 0a2.7 2.7 0 1 0 -5.4 0M720.2 424.5v4.6M740.3 440.0a2.7 2.7 0 1 0 5.4 0a2.7 2.7 0 1 0 -5.4 0M743.0 437.7v4.6M701.7 420.5a2.7 2.7 0 1 0 5.4 0a2.7 2.7 0 1 0 -5.4 0M704.4 418.2v4.6M698.7 422.2a2.7 2.7 0 1 0 5.4 0a2.7 2.7 0 1 0 -5.4 0M701.4 419.9v4.6M696.0 423.8a2.7 2.7 0 1 0 5.4 0a2.7 2.7 0 1 0 -5.4 0M698.7 421.5v4.6M726.2 434.6a2.7 2.7 0 1 0 5.4 0a2.7 2.7 0 1 0 -5.4 0M728.9 432.3v4.6M723.2 436.3a2.7 2.7 0 1 0 5.4 0a2.7 2.7 0 1 0 -5.4 0M725.9 434.0v4.6M720.5 437.9a2.7 2.7 0 1 0 5.4 0a2.7 2.7 0 1 0 -5.4 0M723.2 435.6v4.6M750.7 448.8a2.7 2.7 0 1 0 5.4 0a2.7 2.7 0 1 0 -5.4 0M753.4 446.4v4.6M747.7 450.5a2.7 2.7 0 1 0 5.4 0a2.7 2.7 0 1 0 -5.4 0M750.4 448.2v4.6M745.0 452.0a2.7 2.7 0 1 0 5.4 0a2.7 2.7 0 1 0 -5.4 0M747.7 449.7v4.6M707.7 432.4a2.7 2.7 0 1 0 5.4 0a2.7 2.7 0 1 0 -5.4 0M710.4 430.1v4.6M730.6 445.6a2.7 2.7 0 1 0 5.4 0a2.7 2.7 0 1 0 -5.4 0M733.3 443.3v4.6M691.9 426.1a2.7 2.7 0 1 0 5.4 0a2.7 2.7 0 1 0 -5.4 0M694.6 423.8v4.6M688.9 427.9a2.7 2.7 0 1 0 5.4 0a2.7 2.7 0 1 0 -5.4 0M691.6 425.6v4.6M686.2 429.4a2.7 2.7 0 1 0 5.4 0a2.7 2.7 0 1 0 -5.4 0M688.9 427.1v4.6M716.4 440.3a2.7 2.7 0 1 0 5.4 0a2.7 2.7 0 1 0 -5.4 0M719.1 438.0v4.6M713.4 442.0a2.7 2.7 0 1 0 5.4 0a2.7 2.7 0 1 0 -5.4 0M716.1 439.7v4.6M710.7 443.6a2.7 2.7 0 1 0 5.4 0a2.7 2.7 0 1 0 -5.4 0M713.4 441.3v4.6M740.9 454.4a2.7 2.7 0 1 0 5.4 0a2.7 2.7 0 1 0 -5.4 0M743.6 452.1v4.6M737.9 456.1a2.7 2.7 0 1 0 5.4 0a2.7 2.7 0 1 0 -5.4 0M740.6 453.8v4.6M735.2 457.7a2.7 2.7 0 1 0 5.4 0a2.7 2.7 0 1 0 -5.4 0M737.9 455.4v4.6M697.9 438.1a2.7 2.7 0 1 0 5.4 0a2.7 2.7 0 1 0 -5.4 0M700.6 435.8v4.6M720.8 451.3a2.7 2.7 0 1 0 5.4 0a2.7 2.7 0 1 0 -5.4 0M723.5 449.0v4.6M682.1 431.8a2.7 2.7 0 1 0 5.4 0a2.7 2.7 0 1 0 -5.4 0M684.8 429.5v4.6M679.1 433.5a2.7 2.7 0 1 0 5.4 0a2.7 2.7 0 1 0 -5.4 0M681.8 431.2v4.6M676.4 435.1a2.7 2.7 0 1 0 5.4 0a2.7 2.7 0 1 0 -5.4 0M679.1 432.8v4.6M706.6 445.9a2.7 2.7 0 1 0 5.4 0a2.7 2.7 0 1 0 -5.4 0M709.3 443.6v4.6M703.6 447.7a2.7 2.7 0 1 0 5.4 0a2.7 2.7 0 1 0 -5.4 0M706.3 445.4v4.6M700.9 449.2a2.7 2.7 0 1 0 5.4 0a2.7 2.7 0 1 0 -5.4 0M703.6 446.9v4.6M731.1 460.1a2.7 2.7 0 1 0 5.4 0a2.7 2.7 0 1 0 -5.4 0M733.8 457.8v4.6M728.1 461.8a2.7 2.7 0 1 0 5.4 0a2.7 2.7 0 1 0 -5.4 0M730.8 459.5v4.6M725.4 463.4a2.7 2.7 0 1 0 5.4 0a2.7 2.7 0 1 0 -5.4 0M728.1 461.1v4.6M688.1 443.7a2.7 2.7 0 1 0 5.4 0a2.7 2.7 0 1 0 -5.4 0M690.8 441.4v4.6M711.0 456.9a2.7 2.7 0 1 0 5.4 0a2.7 2.7 0 1 0 -5.4 0M713.7 454.6v4.6M672.3 437.4a2.7 2.7 0 1 0 5.4 0a2.7 2.7 0 1 0 -5.4 0M675.0 435.1v4.6M669.4 439.2a2.7 2.7 0 1 0 5.4 0a2.7 2.7 0 1 0 -5.4 0M672.1 436.9v4.6M666.6 440.7a2.7 2.7 0 1 0 5.4 0a2.7 2.7 0 1 0 -5.4 0M669.3 438.4v4.6M696.8 451.6a2.7 2.7 0 1 0 5.4 0a2.7 2.7 0 1 0 -5.4 0M699.5 449.3v4.6M693.8 453.3a2.7 2.7 0 1 0 5.4 0a2.7 2.7 0 1 0 -5.4 0M696.5 451.0v4.6M691.1 454.9a2.7 2.7 0 1 0 5.4 0a2.7 2.7 0 1 0 -5.4 0M693.8 452.6v4.6M721.3 465.7a2.7 2.7 0 1 0 5.4 0a2.7 2.7 0 1 0 -5.4 0M724.0 463.4v4.6M718.3 467.4a2.7 2.7 0 1 0 5.4 0a2.7 2.7 0 1 0 -5.4 0M721.0 465.1v4.6M715.6 469.0a2.7 2.7 0 1 0 5.4 0a2.7 2.7 0 1 0 -5.4 0M718.3 466.7v4.6M678.3 449.4a2.7 2.7 0 1 0 5.4 0a2.7 2.7 0 1 0 -5.4 0M681.0 447.1v4.6M701.2 462.6a2.7 2.7 0 1 0 5.4 0a2.7 2.7 0 1 0 -5.4 0M703.9 460.3v4.6" fill="#fff" fill-opacity="0.35" stroke="#2c2c2c" stroke-width="0.75"/>
<path d="M714.8 304.8a2.2 2.2 0 1 0 4.4 0a2.2 2.2 0 1 0 -4.4 0M717.0 302.9v3.8M710.6 306.2a2.2 2.2 0 1 0 4.4 0a2.2 2.2 0 1 0 -4.4 0M712.8 304.3v3.8M713.5 301.8a2.2 2.2 0 1 0 4.4 0a2.2 2.2 0 1 0 -4.4 0M715.7 299.9v3.8M714.1 305.6a2.2 2.2 0 1 0 4.4 0a2.2 2.2 0 1 0 -4.4 0M716.3 303.7v3.8M709.8 304.4a2.2 2.2 0 1 0 4.4 0a2.2 2.2 0 1 0 -4.4 0M712.0 302.5v3.8M717.4 303.2a2.2 2.2 0 1 0 4.4 0a2.2 2.2 0 1 0 -4.4 0M719.6 301.3v3.8M712.7 305.8a2.2 2.2 0 1 0 4.4 0a2.2 2.2 0 1 0 -4.4 0M714.9 303.9v3.8M715.2 348.3a2.2 2.2 0 1 0 4.4 0a2.2 2.2 0 1 0 -4.4 0M717.4 346.4v3.8M710.0 350.0a2.2 2.2 0 1 0 4.4 0a2.2 2.2 0 1 0 -4.4 0M712.2 348.1v3.8M713.7 344.5a2.2 2.2 0 1 0 4.4 0a2.2 2.2 0 1 0 -4.4 0M715.9 342.6v3.8M714.4 349.3a2.2 2.2 0 1 0 4.4 0a2.2 2.2 0 1 0 -4.4 0M716.6 347.4v3.8M709.0 347.9a2.2 2.2 0 1 0 4.4 0a2.2 2.2 0 1 0 -4.4 0M711.2 346.0v3.8M718.4 346.3a2.2 2.2 0 1 0 4.4 0a2.2 2.2 0 1 0 -4.4 0M720.6 344.4v3.8M712.6 349.5a2.2 2.2 0 1 0 4.4 0a2.2 2.2 0 1 0 -4.4 0M714.8 347.6v3.8M711.2 346.1a2.2 2.2 0 1 0 4.4 0a2.2 2.2 0 1 0 -4.4 0M713.4 344.2v3.8M719.0 349.6a2.2 2.2 0 1 0 4.4 0a2.2 2.2 0 1 0 -4.4 0M721.2 347.7v3.8M714.4 253.6a2.2 2.2 0 1 0 4.4 0a2.2 2.2 0 1 0 -4.4 0M716.6 251.7v3.8M711.2 254.7a2.2 2.2 0 1 0 4.4 0a2.2 2.2 0 1 0 -4.4 0M713.4 252.8v3.8M713.4 251.3a2.2 2.2 0 1 0 4.4 0a2.2 2.2 0 1 0 -4.4 0M715.6 249.4v3.8M714.3 398.6a2.2 2.2 0 1 0 4.4 0a2.2 2.2 0 1 0 -4.4 0M716.5 396.7v3.8M711.3 399.6a2.2 2.2 0 1 0 4.4 0a2.2 2.2 0 1 0 -4.4 0M713.5 397.7v3.8M763.5 336.1a2.2 2.2 0 1 0 4.4 0a2.2 2.2 0 1 0 -4.4 0M765.7 334.2v3.8M759.8 337.3a2.2 2.2 0 1 0 4.4 0a2.2 2.2 0 1 0 -4.4 0M762.0 335.4v3.8M762.4 333.4a2.2 2.2 0 1 0 4.4 0a2.2 2.2 0 1 0 -4.4 0M764.6 331.5v3.8M762.9 336.8a2.2 2.2 0 1 0 4.4 0a2.2 2.2 0 1 0 -4.4 0M765.1 334.9v3.8M763.3 369.1a2.2 2.2 0 1 0 4.4 0a2.2 2.2 0 1 0 -4.4 0M765.5 367.2v3.8M760.1 370.2a2.2 2.2 0 1 0 4.4 0a2.2 2.2 0 1 0 -4.4 0M762.3 368.3v3.8M762.3 366.8a2.2 2.2 0 1 0 4.4 0a2.2 2.2 0 1 0 -4.4 0M764.5 364.9v3.8M714.2 324.0a2.2 2.2 0 1 0 4.4 0a2.2 2.2 0 1 0 -4.4 0M716.4 322.1v3.8M711.5 324.9a2.2 2.2 0 1 0 4.4 0a2.2 2.2 0 1 0 -4.4 0M713.7 323.0v3.8M735.9 331.0a2.2 2.2 0 1 0 4.4 0a2.2 2.2 0 1 0 -4.4 0M738.1 329.1v3.8M733.2 331.9a2.2 2.2 0 1 0 4.4 0a2.2 2.2 0 1 0 -4.4 0M735.4 330.0v3.8M750.8 346.0a2.2 2.2 0 1 0 4.4 0a2.2 2.2 0 1 0 -4.4 0M753.0 344.1v3.8M698.8 362.0a2.2 2.2 0 1 0 4.4 0a2.2 2.2 0 1 0 -4.4 0M701.0 360.1v3.8M696.3 362.8a2.2 2.2 0 1 0 4.4 0a2.2 2.2 0 1 0 -4.4 0M698.5 360.9v3.8" fill="none" stroke="#3a3a3a" stroke-width="0.55"/>
<path d="M763.0 280.9a1.3 1.3 0 1 0 2.6 0a1.3 1.3 0 1 0 -2.6 0M779.3 290.3a1.3 1.3 0 1 0 2.6 0a1.3 1.3 0 1 0 -2.6 0M795.6 299.7a1.3 1.3 0 1 0 2.6 0a1.3 1.3 0 1 0 -2.6 0M811.9 309.1a1.3 1.3 0 1 0 2.6 0a1.3 1.3 0 1 0 -2.6 0M828.2 318.5a1.3 1.3 0 1 0 2.6 0a1.3 1.3 0 1 0 -2.6 0M844.6 328.0a1.3 1.3 0 1 0 2.6 0a1.3 1.3 0 1 0 -2.6 0M860.9 337.4a1.3 1.3 0 1 0 2.6 0a1.3 1.3 0 1 0 -2.6 0M616.1 309.1a1.3 1.3 0 1 0 2.6 0a1.3 1.3 0 1 0 -2.6 0M665.0 280.9a1.3 1.3 0 1 0 2.6 0a1.3 1.3 0 1 0 -2.6 0M632.4 318.5a1.3 1.3 0 1 0 2.6 0a1.3 1.3 0 1 0 -2.6 0M681.4 290.3a1.3 1.3 0 1 0 2.6 0a1.3 1.3 0 1 0 -2.6 0M648.7 328.0a1.3 1.3 0 1 0 2.6 0a1.3 1.3 0 1 0 -2.6 0M697.7 299.7a1.3 1.3 0 1 0 2.6 0a1.3 1.3 0 1 0 -2.6 0M844.6 384.5a1.3 1.3 0 1 0 2.6 0a1.3 1.3 0 1 0 -2.6 0M828.2 393.9a1.3 1.3 0 1 0 2.6 0a1.3 1.3 0 1 0 -2.6 0M811.9 403.3a1.3 1.3 0 1 0 2.6 0a1.3 1.3 0 1 0 -2.6 0M795.6 412.8a1.3 1.3 0 1 0 2.6 0a1.3 1.3 0 1 0 -2.6 0M779.3 422.2a1.3 1.3 0 1 0 2.6 0a1.3 1.3 0 1 0 -2.6 0M763.0 431.6a1.3 1.3 0 1 0 2.6 0a1.3 1.3 0 1 0 -2.6 0M738.5 417.5a1.3 1.3 0 1 0 2.6 0a1.3 1.3 0 1 0 -2.6 0M811.9 365.3a1.3 1.3 0 1 0 2.6 0a1.3 1.3 0 1 0 -2.6 0M844.6 384.2a1.3 1.3 0 1 0 2.6 0a1.3 1.3 0 1 0 -2.6 0M860.9 375.1a1.3 1.3 0 1 0 2.6 0a1.3 1.3 0 1 0 -2.6 0M811.9 403.3a1.3 1.3 0 1 0 2.6 0a1.3 1.3 0 1 0 -2.6 0M828.2 393.9a1.3 1.3 0 1 0 2.6 0a1.3 1.3 0 1 0 -2.6 0M714.0 206.9a1.3 1.3 0 1 0 2.6 0a1.3 1.3 0 1 0 -2.6 0M714.0 217.6a1.3 1.3 0 1 0 2.6 0a1.3 1.3 0 1 0 -2.6 0M705.0 212.3a1.3 1.3 0 1 0 2.6 0a1.3 1.3 0 1 0 -2.6 0M723.0 212.3a1.3 1.3 0 1 0 2.6 0a1.3 1.3 0 1 0 -2.6 0M714.0 227.7a1.3 1.3 0 1 0 2.6 0a1.3 1.3 0 1 0 -2.6 0M714.0 259.2a1.3 1.3 0 1 0 2.6 0a1.3 1.3 0 1 0 -2.6 0M686.8 243.6a1.3 1.3 0 1 0 2.6 0a1.3 1.3 0 1 0 -2.6 0M741.3 243.6a1.3 1.3 0 1 0 2.6 0a1.3 1.3 0 1 0 -2.6 0M665.0 280.9a1.3 1.3 0 1 0 2.6 0a1.3 1.3 0 1 0 -2.6 0M763.0 280.9a1.3 1.3 0 1 0 2.6 0a1.3 1.3 0 1 0 -2.6 0M714.0 412.6a1.3 1.3 0 1 0 2.6 0a1.3 1.3 0 1 0 -2.6 0M738.5 426.8a1.3 1.3 0 1 0 2.6 0a1.3 1.3 0 1 0 -2.6 0M763.0 440.9a1.3 1.3 0 1 0 2.6 0a1.3 1.3 0 1 0 -2.6 0M704.2 418.3a1.3 1.3 0 1 0 2.6 0a1.3 1.3 0 1 0 -2.6 0M728.7 432.4a1.3 1.3 0 1 0 2.6 0a1.3 1.3 0 1 0 -2.6 0M753.2 446.6a1.3 1.3 0 1 0 2.6 0a1.3 1.3 0 1 0 -2.6 0M694.4 423.9a1.3 1.3 0 1 0 2.6 0a1.3 1.3 0 1 0 -2.6 0M718.9 438.1a1.3 1.3 0 1 0 2.6 0a1.3 1.3 0 1 0 -2.6 0M743.4 452.2a1.3 1.3 0 1 0 2.6 0a1.3 1.3 0 1 0 -2.6 0M684.6 429.6a1.3 1.3 0 1 0 2.6 0a1.3 1.3 0 1 0 -2.6 0M709.1 443.7a1.3 1.3 0 1 0 2.6 0a1.3 1.3 0 1 0 -2.6 0M733.6 457.9a1.3 1.3 0 1 0 2.6 0a1.3 1.3 0 1 0 -2.6 0M674.8 435.2a1.3 1.3 0 1 0 2.6 0a1.3 1.3 0 1 0 -2.6 0M699.3 449.4a1.3 1.3 0 1 0 2.6 0a1.3 1.3 0 1 0 -2.6 0M723.8 463.5a1.3 1.3 0 1 0 2.6 0a1.3 1.3 0 1 0 -2.6 0M665.0 440.9a1.3 1.3 0 1 0 2.6 0a1.3 1.3 0 1 0 -2.6 0M689.5 455.0a1.3 1.3 0 1 0 2.6 0a1.3 1.3 0 1 0 -2.6 0M714.0 469.2a1.3 1.3 0 1 0 2.6 0a1.3 1.3 0 1 0 -2.6 0" fill="#0b6c18"/>
<circle cx="617.4" cy="384.5" r="1.3" fill="#1f8a2a"/><path d="M617.4 384.5l-3.5 4.8h7z" fill="none" stroke="#1f8a2a" stroke-width="1.2"/><path d="M612.4 389.9h10M612.8 392.1l1.4-2M615.0 392.1l1.4-2M617.2 392.1l1.4-2M619.4 392.1l1.4-2M621.6 392.1l1.4-2" stroke="#1f8a2a" stroke-width="1"/>
<circle cx="666.3" cy="412.8" r="1.3" fill="#1f8a2a"/><path d="M666.3 412.8l-3.5 4.8h7z" fill="none" stroke="#1f8a2a" stroke-width="1.2"/><path d="M661.3 418.2h10M661.7 420.4l1.4-2M663.9 420.4l1.4-2M666.1 420.4l1.4-2M668.3 420.4l1.4-2M670.5 420.4l1.4-2" stroke="#1f8a2a" stroke-width="1"/>
<circle cx="764.3" cy="412.8" r="1.3" fill="#1f8a2a"/><path d="M764.3 412.8l-3.5 4.8h7z" fill="none" stroke="#1f8a2a" stroke-width="1.2"/><path d="M759.3 418.2h10M759.7 420.4l1.4-2M761.9 420.4l1.4-2M764.1 420.4l1.4-2M766.3 420.4l1.4-2M768.5 420.4l1.4-2" stroke="#1f8a2a" stroke-width="1"/>
<circle cx="666.3" cy="469.3" r="1.3" fill="#1f8a2a"/><path d="M666.3 469.3l-3.5 4.8h7z" fill="none" stroke="#1f8a2a" stroke-width="1.2"/><path d="M661.3 474.7h10M661.7 476.9l1.4-2M663.9 476.9l1.4-2M666.1 476.9l1.4-2M668.3 476.9l1.4-2M670.5 476.9l1.4-2" stroke="#1f8a2a" stroke-width="1"/>
<circle cx="813.2" cy="384.5" r="1.3" fill="#e0831c"/><path d="M813.2 384.5l-3.5 4.8h7z" fill="none" stroke="#e0831c" stroke-width="1.2"/><path d="M808.2 389.9h10M808.6 392.1l1.4-2M810.8 392.1l1.4-2M813.0 392.1l1.4-2M815.2 392.1l1.4-2M817.4 392.1l1.4-2" stroke="#e0831c" stroke-width="1"/>
<circle cx="862.2" cy="412.8" r="1.3" fill="#e0831c"/><path d="M862.2 412.8l-3.5 4.8h7z" fill="none" stroke="#e0831c" stroke-width="1.2"/><path d="M857.2 418.2h10M857.6 420.4l1.4-2M859.8 420.4l1.4-2M862.0 420.4l1.4-2M864.2 420.4l1.4-2M866.4 420.4l1.4-2" stroke="#e0831c" stroke-width="1"/>
<circle cx="813.2" cy="441.0" r="1.3" fill="#e0831c"/><path d="M813.2 441.0l-3.5 4.8h7z" fill="none" stroke="#e0831c" stroke-width="1.2"/><path d="M808.2 446.4h10M808.6 448.6l1.4-2M810.8 448.6l1.4-2M813.0 448.6l1.4-2M815.2 448.6l1.4-2M817.4 448.6l1.4-2" stroke="#e0831c" stroke-width="1"/>
<circle cx="764.3" cy="469.3" r="1.3" fill="#e0831c"/><path d="M764.3 469.3l-3.5 4.8h7z" fill="none" stroke="#e0831c" stroke-width="1.2"/><path d="M759.3 474.7h10M759.7 476.9l1.4-2M761.9 476.9l1.4-2M764.1 476.9l1.4-2M766.3 476.9l1.4-2M768.5 476.9l1.4-2" stroke="#e0831c" stroke-width="1"/>
</g>
</svg>
<!-- BOTTOM: Member Primary Data -->
<div class="abs" style="left:235px;top:500px;width:1013px;height:243px;background:#f3f3f3"></div>
<div class="abs pur" style="left:235px;top:500px;width:1013px;height:22.5px"></div>
<div class="t" style="left:243px;top:506.5px;font-size:10.2px;color:#fff;-webkit-text-stroke:0.35px #fff">Member Primary Data</div>
<svg class="abs" style="left:1230px;top:505px" width="12" height="12" viewBox="0 0 12 12"><path d="M1.8 1.8l8.6 8.6M10.4 1.8l-8.6 8.6" stroke="#fff" stroke-width="1"/></svg>
<div class="abs" style="left:235.2px;top:524.2px;width:51.6px;height:26.8px;background:#fff;border-top:2px solid #1c6fd2"></div>
<div class="t" style="left:235.2px;width:51.6px;text-align:center;top:533.5px;font-size:10.2px;color:#1a1a1a;-webkit-text-stroke:0.35px #1a1a1a">Primary</div>
<div class="abs" style="left:286.8px;top:525.5px;width:62.4px;height:25px;background:#f4f4f4;border:1px solid #e2e2e2;border-left:0"></div>
<div class="t" style="left:286.8px;width:62.4px;text-align:center;top:533.5px;font-size:9.8px;color:#7c7c7c">Advanced</div>
<div class="abs" style="left:349.2px;top:525.5px;width:65.0px;height:25px;background:#f4f4f4;border:1px solid #e2e2e2;border-left:0"></div>
<div class="t" style="left:349.2px;width:65.0px;text-align:center;top:533.5px;font-size:9.8px;color:#7c7c7c">Hot Rolled</div>
<div class="abs" style="left:414.2px;top:525.5px;width:75.4px;height:25px;background:#f4f4f4;border:1px solid #e2e2e2;border-left:0"></div>
<div class="t" style="left:414.2px;width:75.4px;text-align:center;top:533.5px;font-size:9.8px;color:#7c7c7c">Cold Formed</div>
<div class="abs" style="left:489.6px;top:525.5px;width:45.0px;height:25px;background:#f4f4f4;border:1px solid #e2e2e2;border-left:0"></div>
<div class="t" style="left:489.6px;width:45.0px;text-align:center;top:533.5px;font-size:9.8px;color:#7c7c7c">Wood</div>
<div class="abs" style="left:534.6px;top:525.5px;width:85.8px;height:25px;background:#f4f4f4;border:1px solid #e2e2e2;border-left:0"></div>
<div class="t" style="left:534.6px;width:85.8px;text-align:center;top:533.5px;font-size:9.8px;color:#7c7c7c">Concrete Beam</div>
<div class="abs" style="left:620.4px;top:525.5px;width:96.4px;height:25px;background:#f4f4f4;border:1px solid #e2e2e2;border-left:0"></div>
<div class="t" style="left:620.4px;width:96.4px;text-align:center;top:533.5px;font-size:9.8px;color:#7c7c7c">Concrete Column</div>
<div class="abs" style="left:716.8px;top:525.5px;width:63.4px;height:25px;background:#f4f4f4;border:1px solid #e2e2e2;border-left:0"></div>
<div class="t" style="left:716.8px;width:63.4px;text-align:center;top:533.5px;font-size:9.8px;color:#7c7c7c">Aluminum</div>
<div class="abs" style="left:780.2px;top:525.5px;width:56.6px;height:25px;background:#f4f4f4;border:1px solid #e2e2e2;border-left:0"></div>
<div class="t" style="left:780.2px;width:56.6px;text-align:center;top:533.5px;font-size:9.8px;color:#7c7c7c">Stainless</div>
<div class="abs" style="left:836.8px;top:525.5px;width:89.6px;height:25px;background:#f4f4f4;border:1px solid #e2e2e2;border-left:0"></div>
<div class="t" style="left:836.8px;width:89.6px;text-align:center;top:533.5px;font-size:9.8px;color:#7c7c7c">RISAConnection</div>
<div class="abs" style="left:235.5px;top:550.5px;width:1005px;height:191.5px;background:#fff;border-top:1px solid #e4e4e4"></div>
<div class="abs" style="left:236px;top:551px;width:548.5px;height:18.5px;background:#f0f0f0"></div>
<div class="abs" style="left:236px;top:551px;width:43px;height:189.6px;background:#f0f0f0"></div>
<div class="abs" style="left:279px;top:551px;width:43.7px;height:18.5px;background:#cddff5"></div>
<div class="abs" style="left:236px;top:569.5px;width:43px;height:19px;background:#cddff5"></div>
<div class="abs" style="left:279px;top:588.2px;width:505.5px;height:19px;background:#fdfdf1"></div>
<div class="abs" style="left:279px;top:626.3px;width:505.5px;height:19px;background:#fdfdf1"></div>
<div class="abs" style="left:279px;top:664.3px;width:505.5px;height:19px;background:#fdfdf1"></div>
<div class="abs" style="left:279px;top:702.3px;width:505.5px;height:19px;background:#fdfdf1"></div>
<div class="abs" style="left:279px;top:569.5px;width:43.7px;height:19px;background:#d9f2da"></div>
<div class="abs" style="left:236px;top:551.0px;width:549.5px;height:1px;background:#e0e0e0"></div>
<div class="abs" style="left:236px;top:569.2px;width:549.5px;height:1px;background:#e0e0e0"></div>
<div class="abs" style="left:236px;top:588.2px;width:549.5px;height:1px;background:#e0e0e0"></div>
<div class="abs" style="left:236px;top:607.2px;width:549.5px;height:1px;background:#e0e0e0"></div>
<div class="abs" style="left:236px;top:626.3px;width:549.5px;height:1px;background:#e0e0e0"></div>
<div class="abs" style="left:236px;top:645.3px;width:549.5px;height:1px;background:#e0e0e0"></div>
<div class="abs" style="left:236px;top:664.3px;width:549.5px;height:1px;background:#e0e0e0"></div>
<div class="abs" style="left:236px;top:683.3px;width:549.5px;height:1px;background:#e0e0e0"></div>
<div class="abs" style="left:236px;top:702.3px;width:549.5px;height:1px;background:#e0e0e0"></div>
<div class="abs" style="left:236px;top:721.4px;width:549.5px;height:1px;background:#e0e0e0"></div>
<div class="abs" style="left:236px;top:740.4px;width:549.5px;height:1px;background:#e0e0e0"></div>
<div class="abs" style="left:236px;top:551px;width:1px;height:189.4px;background:#e0e0e0"></div>
<div class="abs" style="left:279px;top:551px;width:1px;height:189.4px;background:#e0e0e0"></div>
<div class="abs" style="left:322.7px;top:551px;width:1px;height:189.4px;background:#e0e0e0"></div>
<div class="abs" style="left:366.3px;top:551px;width:1px;height:189.4px;background:#e0e0e0"></div>
<div class="abs" style="left:410.1px;top:551px;width:1px;height:189.4px;background:#e0e0e0"></div>
<div class="abs" style="left:453.5px;top:551px;width:1px;height:189.4px;background:#e0e0e0"></div>
<div class="abs" style="left:510.3px;top:551px;width:1px;height:189.4px;background:#e0e0e0"></div>
<div class="abs" style="left:579.3px;top:551px;width:1px;height:189.4px;background:#e0e0e0"></div>
<div class="abs" style="left:622.7px;top:551px;width:1px;height:189.4px;background:#e0e0e0"></div>
<div class="abs" style="left:682px;top:551px;width:1px;height:189.4px;background:#e0e0e0"></div>
<div class="abs" style="left:725.7px;top:551px;width:1px;height:189.4px;background:#e0e0e0"></div>
<div class="abs" style="left:784.5px;top:551px;width:1px;height:189.4px;background:#e0e0e0"></div>
<svg class="abs" style="left:270px;top:560px" width="9" height="9" viewBox="0 0 9 9"><path d="M8.5 0.5v8h-8z" fill="#d8d8d8"/></svg>
<div class="t th" style="left:284.2px;top:557.0px">Label</div>
<div class="t th" style="left:327.9px;top:557.0px">I Node</div>
<div class="t th" style="left:371.5px;top:557.0px">J Node</div>
<div class="t th" style="left:415.3px;top:557.0px">K Node</div>
<div class="t th" style="left:458.7px;top:557.0px">Rotate(deg)</div>
<div class="t th" style="left:515.5px;top:557.0px">Section/Shape</div>
<div class="t th" style="left:584.5px;top:557.0px">Type</div>
<div class="t th" style="left:627.9px;top:557.0px">Design List</div>
<div class="t th" style="left:687.2px;top:557.0px">Material</div>
<div class="t th" style="left:730.9px;top:557.0px">Design Rule</div>
<div class="t td" style="left:236px;width:43px;text-align:center;top:575.6px;color:#222">1</div>
<div class="t td" style="left:284.2px;top:575.6px">M70</div>
<div class="t td" style="left:327.9px;top:575.6px">N419</div>
<div class="t td" style="left:371.5px;top:575.6px">N420</div>
<div class="t td" style="left:515.5px;top:575.6px">W10X12</div>
<div class="t td" style="left:584.5px;top:575.6px">Beam</div>
<div class="t td" style="left:627.9px;top:575.6px">Wide Flange</div>
<div class="t td" style="left:687.2px;top:575.6px">A992</div>
<div class="t td" style="left:730.9px;top:575.6px">Wide Flange</div>
<div class="t td" style="left:236px;width:43px;text-align:center;top:594.6px;color:#222">2</div>
<div class="t td" style="left:284.2px;top:594.6px">M71</div>
<div class="t td" style="left:327.9px;top:594.6px">N416</div>
<div class="t td" style="left:371.5px;top:594.6px">N418</div>
<div class="t td" style="left:515.5px;top:594.6px">W10X17</div>
<div class="t td" style="left:584.5px;top:594.6px">Beam</div>
<div class="t td" style="left:627.9px;top:594.6px">Wide Flange</div>
<div class="t td" style="left:687.2px;top:594.6px">A992</div>
<div class="t td" style="left:730.9px;top:594.6px">Wide Flange</div>
<div class="t td" style="left:236px;width:43px;text-align:center;top:613.6px;color:#222">3</div>
<div class="t td" style="left:284.2px;top:613.6px">M72</div>
<div class="t td" style="left:327.9px;top:613.6px">N418</div>
<div class="t td" style="left:371.5px;top:613.6px">N414</div>
<div class="t td" style="left:515.5px;top:613.6px">W10X17</div>
<div class="t td" style="left:584.5px;top:613.6px">Beam</div>
<div class="t td" style="left:627.9px;top:613.6px">Wide Flange</div>
<div class="t td" style="left:687.2px;top:613.6px">A992</div>
<div class="t td" style="left:730.9px;top:613.6px">Wide Flange</div>
<div class="t td" style="left:236px;width:43px;text-align:center;top:632.7px;color:#222">4</div>
<div class="t td" style="left:284.2px;top:632.7px">M73</div>
<div class="t td" style="left:327.9px;top:632.7px">N414</div>
<div class="t td" style="left:371.5px;top:632.7px">N413</div>
<div class="t td" style="left:515.5px;top:632.7px">W10X12</div>
<div class="t td" style="left:584.5px;top:632.7px">Beam</div>
<div class="t td" style="left:627.9px;top:632.7px">Wide Flange</div>
<div class="t td" style="left:687.2px;top:632.7px">A992</div>
<div class="t td" style="left:730.9px;top:632.7px">Wide Flange</div>
<div class="t td" style="left:236px;width:43px;text-align:center;top:651.7px;color:#222">5</div>
<div class="t td" style="left:284.2px;top:651.7px">M74</div>
<div class="t td" style="left:327.9px;top:651.7px">N413</div>
<div class="t td" style="left:371.5px;top:651.7px">N421</div>
<div class="t td" style="left:515.5px;top:651.7px">W10X17</div>
<div class="t td" style="left:584.5px;top:651.7px">Beam</div>
<div class="t td" style="left:627.9px;top:651.7px">Wide Flange</div>
<div class="t td" style="left:687.2px;top:651.7px">A992</div>
<div class="t td" style="left:730.9px;top:651.7px">Wide Flange</div>
<div class="t td" style="left:236px;width:43px;text-align:center;top:670.7px;color:#222">6</div>
<div class="t td" style="left:284.2px;top:670.7px">M75</div>
<div class="t td" style="left:327.9px;top:670.7px">N421</div>
<div class="t td" style="left:371.5px;top:670.7px">N415</div>
<div class="t td" style="left:515.5px;top:670.7px">W10X12</div>
<div class="t td" style="left:584.5px;top:670.7px">Beam</div>
<div class="t td" style="left:627.9px;top:670.7px">Wide Flange</div>
<div class="t td" style="left:687.2px;top:670.7px">A992</div>
<div class="t td" style="left:730.9px;top:670.7px">Wide Flange</div>
<div class="t td" style="left:236px;width:43px;text-align:center;top:689.7px;color:#222">7</div>
<div class="t td" style="left:284.2px;top:689.7px">M76</div>
<div class="t td" style="left:327.9px;top:689.7px">N415</div>
<div class="t td" style="left:371.5px;top:689.7px">N422</div>
<div class="t td" style="left:515.5px;top:689.7px">W10X17</div>
<div class="t td" style="left:584.5px;top:689.7px">Beam</div>
<div class="t td" style="left:627.9px;top:689.7px">Wide Flange</div>
<div class="t td" style="left:687.2px;top:689.7px">A992</div>
<div class="t td" style="left:730.9px;top:689.7px">Wide Flange</div>
<div class="t td" style="left:236px;width:43px;text-align:center;top:708.7px;color:#222">8</div>
<div class="t td" style="left:284.2px;top:708.7px">M77</div>
<div class="t td" style="left:327.9px;top:708.7px">N419</div>
<div class="t td" style="left:371.5px;top:708.7px">N422</div>
<div class="t td" style="left:515.5px;top:708.7px">W10X17</div>
<div class="t td" style="left:584.5px;top:708.7px">Beam</div>
<div class="t td" style="left:627.9px;top:708.7px">Wide Flange</div>
<div class="t td" style="left:687.2px;top:708.7px">A992</div>
<div class="t td" style="left:730.9px;top:708.7px">Wide Flange</div>
<div class="t td" style="left:236px;width:43px;text-align:center;top:727.8px;color:#222">9</div>
<div class="t td" style="left:284.2px;top:727.8px">M78</div>
<div class="t td" style="left:327.9px;top:727.8px">N422</div>
<div class="t td" style="left:371.5px;top:727.8px">N423</div>
<div class="t td" style="left:515.5px;top:727.8px">W10X12</div>
<div class="t td" style="left:584.5px;top:727.8px">Beam</div>
<div class="t td" style="left:627.9px;top:727.8px">Wide Flange</div>
<div class="t td" style="left:687.2px;top:727.8px">A992</div>
<div class="t td" style="left:730.9px;top:727.8px">Wide Flange</div>
<div class="abs" style="left:1240.5px;top:551px;width:7px;height:191px;background:#f3f3f3"></div>
<div class="abs" style="left:1242.2px;top:561px;width:3.4px;height:12px;border-radius:2px;background:#7a7a7a"></div>
<svg class="abs" style="left:1240px;top:552px" width="8" height="6" viewBox="0 0 8 6"><path d="M1.4 4.6l2.6-3.4l2.6 3.4z" fill="#9a9a9a"/></svg>
<svg class="abs" style="left:1240px;top:732px" width="8" height="6" viewBox="0 0 8 6"><path d="M1.4 1.2l2.6 3.4l2.6-3.4z" fill="#9a9a9a"/></svg>
<!-- RIGHT: Explorer -->
<div class="abs" style="left:1249px;top:123px;width:151px;height:620px;background:#fff;border-left:1px solid #dcdcdc"></div>
<div class="abs pur" style="left:1250px;top:122.4px;width:150px;height:23.4px"></div>
<div class="t" style="left:1258.5px;top:129px;font-size:9.7px;color:#fff;-webkit-text-stroke:0.35px #fff">Explorer</div>
<div class="t" style="left:1260px;top:152.6px;font-size:10.2px;color:#1a1a1a;-webkit-text-stroke:0.35px #1a1a1a">Data Entry</div>
<svg class="abs" style="left:1380px;top:152px" width="12" height="10" viewBox="0 0 12 10"><path d="M2.4 7l3.6-3.6l3.6 3.6" fill="none" stroke="#333" stroke-width="1"/></svg>
<div class="t ex" style="top:175.9px">Project Grid</div>
<div class="t ex" style="top:194.8px">Materials</div>
<div class="t ex" style="top:213.8px">Section Sets</div>
<div class="t ex" style="top:232.7px">Member Design Rules</div>
<div class="t ex" style="top:251.7px">Wall Design Rules</div>
<div class="t ex" style="top:270.6px">Seismic Design Rules</div>
<div class="t ex" style="top:289.6px">Connection Rules</div>
<div class="t ex" style="top:308.6px">Node Coordinates</div>
<div class="t ex" style="top:327.5px">Boundary Conditions</div>
<div class="t ex" style="top:346.4px">Diaphragms</div>
<div class="t ex" style="top:365.4px">Drift Definitions</div>
<div class="t ex" style="top:384.3px">Members</div>
<div class="t ex" style="top:403.3px">Plates</div>
<div class="t ex" style="top:422.2px">Solids</div>
<div class="t ex" style="top:441.2px">Wall Panels</div>
<div class="t ex" style="top:460.1px">Basic Load Cases</div>
<div class="t ex" style="top:479.1px">Nodal Loads</div>
<div class="t ex" style="top:498.0px">Point Loads</div>
<div class="t ex" style="top:517.0px">Distributed Loads</div>
<div class="t ex" style="top:535.9px">Member Area Loads</div>
<div class="t ex" style="top:554.9px">Surface Loads</div>
<div class="t ex" style="top:573.8px">Moving Loads</div>
<div class="t ex" style="top:592.8px">Time History Loads</div>
<div class="t ex" style="top:611.7px">Load Combinations</div>
<div class="abs" style="left:1250px;top:635px;width:150px;height:1px;background:#dedede"></div>
<div class="t" style="left:1260px;top:644.5px;font-size:9.4px;color:#c4c4c4">Results</div>
<div class="abs" style="left:1309.5px;top:642px;width:61px;height:14px;border-radius:7px;background:#eeeeee"></div>
<div class="abs" style="left:1309.5px;top:642px;width:26.5px;height:14px;border-radius:7px;background:#8fb6e8"></div>
<div class="t" style="left:1315.5px;top:645.8px;font-size:8.2px;color:#fff">Env</div>
<div class="t" style="left:1341.5px;top:645.8px;font-size:8.2px;color:#bdbdbd">Batch</div>
<svg class="abs" style="left:1380px;top:644px" width="12" height="10" viewBox="0 0 12 10"><path d="M2.4 3.4l3.6 3.6l3.6-3.6" fill="none" stroke="#c8c8c8" stroke-width="1"/></svg>
</div></body></html>
